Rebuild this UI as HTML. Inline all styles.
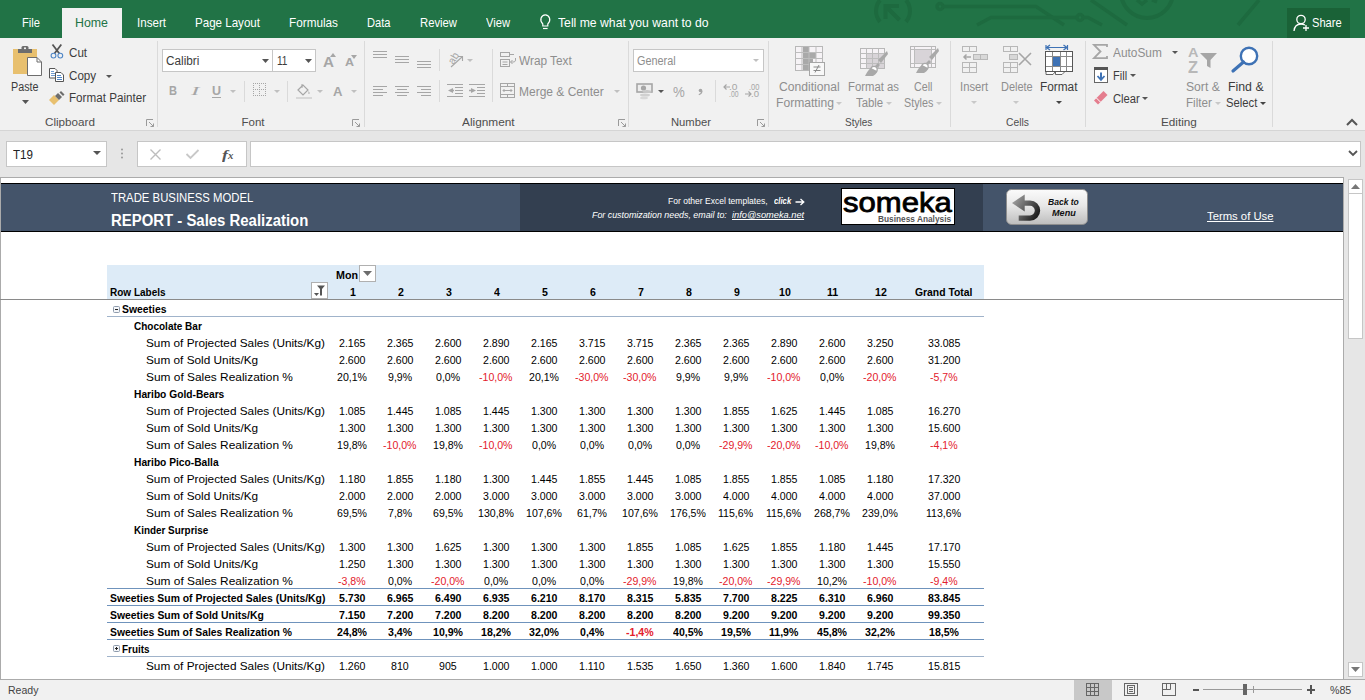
<!DOCTYPE html>
<html><head><meta charset="utf-8"><title>Excel</title>
<style>
html,body{margin:0;padding:0;}
body{width:1365px;height:700px;position:relative;overflow:hidden;background:#fff;font-family:'Liberation Sans', sans-serif;}
.t{position:absolute;white-space:pre;transform-origin:0 0;}
svg{overflow:visible}
</style></head><body>
<div style="position:absolute;left:0px;top:0px;width:1365px;height:38px;background:#217346;"></div>
<svg style="position:absolute;left:0px;top:0px;" width="1365" height="38" viewBox="0 0 1365 38">
<g fill="none" stroke="#1d6a3f" stroke-width="4">
<path d="M880,0.1 A17,17 0 0 0 880,21.9"/>
<path d="M906,0.1 A17,17 0 0 1 906,21.9"/>
<path d="M885.5,19 V6 H899 M886,6.5 L899.5,20"/>
</g>
<g fill="none" stroke="#1d6a3f" stroke-width="3.5">
<circle cx="940" cy="6.5" r="3"/>
<path d="M943,6.5 H1036 L1064,25"/>
<path d="M977,25 L991,17.5 H1077"/>
<circle cx="1080" cy="17.5" r="3"/>
<path d="M1083,17.5 H1088 L1102,25"/>
<path d="M1091,0 L1127,25"/>
<circle cx="1147" cy="-8" r="26" stroke-width="4"/>
<path d="M1137,0 L1142,4 L1147,0 M1152,0 L1157,2"/>
<path d="M1259,0 L1238,25"/>
</g></svg>
<div style="position:absolute;left:62px;top:8px;width:60px;height:30px;background:#F1F1F1;"></div>
<span class="t" style="left:21.50px;top:16.35px;font:400 13px 'Liberation Sans', sans-serif;line-height:13px;color:#fff;transform:scaleX(0.8591);">File</span>
<span class="t" style="left:75.20px;top:16.35px;font:400 13px 'Liberation Sans', sans-serif;line-height:13px;color:#217346;transform:scaleX(0.9514);">Home</span>
<span class="t" style="left:137.10px;top:16.35px;font:400 13px 'Liberation Sans', sans-serif;line-height:13px;color:#fff;transform:scaleX(0.8919);">Insert</span>
<span class="t" style="left:195.20px;top:16.35px;font:400 13px 'Liberation Sans', sans-serif;line-height:13px;color:#fff;transform:scaleX(0.8902);">Page Layout</span>
<span class="t" style="left:289.20px;top:16.35px;font:400 13px 'Liberation Sans', sans-serif;line-height:13px;color:#fff;transform:scaleX(0.9043);">Formulas</span>
<span class="t" style="left:367.30px;top:16.35px;font:400 13px 'Liberation Sans', sans-serif;line-height:13px;color:#fff;transform:scaleX(0.8555);">Data</span>
<span class="t" style="left:420.30px;top:16.35px;font:400 13px 'Liberation Sans', sans-serif;line-height:13px;color:#fff;transform:scaleX(0.8680);">Review</span>
<span class="t" style="left:486.30px;top:16.35px;font:400 13px 'Liberation Sans', sans-serif;line-height:13px;color:#fff;transform:scaleX(0.8586);">View</span>
<span class="t" style="left:557.50px;top:16.35px;font:400 13px 'Liberation Sans', sans-serif;line-height:13px;color:#fff;transform:scaleX(0.9388);">Tell me what you want to do</span>
<svg style="position:absolute;left:540px;top:14px;" width="11" height="16" viewBox="0 0 11 16"><g fill="none" stroke="#fff" stroke-width="1.2"><path d="M2.8,10 C0.8,8 0.6,5.5 1.1,4 C2,1.5 3.5,0.8 5.3,0.8 C7.1,0.8 8.6,1.5 9.5,4 C10,5.5 9.8,8 7.8,10 V12 H2.8 Z"/><path d="M3,14.5 H7.6"/></g></svg>
<div style="position:absolute;left:1287px;top:8px;width:63px;height:30px;background:#1a6237;"></div>
<svg style="position:absolute;left:1293px;top:14px;" width="18" height="18" viewBox="0 0 18 18"><g fill="none" stroke="#fff" stroke-width="1.3"><circle cx="8" cy="5.5" r="4.2"/><path d="M1,17 C1.5,12 4,10 8,10 C10,10 11,10.5 12,11"/><path d="M13,11 V17 M10,14 H16"/></g></svg>
<span class="t" style="left:1312.30px;top:16.35px;font:400 13px 'Liberation Sans', sans-serif;line-height:13px;color:#fff;transform:scaleX(0.8558);">Share</span>
<div style="position:absolute;left:0px;top:38px;width:1365px;height:92px;background:#F1F1F1;"></div>
<div style="position:absolute;left:0px;top:130px;width:1365px;height:1px;background:#D5D5D5;"></div>
<div style="position:absolute;left:157px;top:41px;width:1px;height:86px;background:#DADADA;"></div>
<div style="position:absolute;left:364px;top:41px;width:1px;height:86px;background:#DADADA;"></div>
<div style="position:absolute;left:628px;top:41px;width:1px;height:86px;background:#DADADA;"></div>
<div style="position:absolute;left:768px;top:41px;width:1px;height:86px;background:#DADADA;"></div>
<div style="position:absolute;left:950px;top:41px;width:1px;height:86px;background:#DADADA;"></div>
<div style="position:absolute;left:1085px;top:41px;width:1px;height:86px;background:#DADADA;"></div>
<div style="position:absolute;left:1272px;top:41px;width:1px;height:86px;background:#DADADA;"></div>
<span class="t" style="left:45.40px;top:116.62px;font:400 11.5px 'Liberation Sans', sans-serif;line-height:11.5px;color:#4E4E4E;transform:scaleX(1.0156);">Clipboard</span>
<span class="t" style="left:241.50px;top:116.62px;font:400 11.5px 'Liberation Sans', sans-serif;line-height:11.5px;color:#4E4E4E;">Font</span>
<span class="t" style="left:462.00px;top:116.62px;font:400 11.5px 'Liberation Sans', sans-serif;line-height:11.5px;color:#4E4E4E;transform:scaleX(1.0285);">Alignment</span>
<span class="t" style="left:670.70px;top:116.62px;font:400 11.5px 'Liberation Sans', sans-serif;line-height:11.5px;color:#4E4E4E;transform:scaleX(0.9778);">Number</span>
<span class="t" style="left:844.70px;top:116.62px;font:400 11.5px 'Liberation Sans', sans-serif;line-height:11.5px;color:#4E4E4E;transform:scaleX(0.8714);">Styles</span>
<span class="t" style="left:1005.70px;top:116.62px;font:400 11.5px 'Liberation Sans', sans-serif;line-height:11.5px;color:#4E4E4E;transform:scaleX(0.8958);">Cells</span>
<span class="t" style="left:1160.60px;top:116.62px;font:400 11.5px 'Liberation Sans', sans-serif;line-height:11.5px;color:#4E4E4E;transform:scaleX(1.0207);">Editing</span>
<svg style="position:absolute;left:146px;top:119px;" width="8" height="8" viewBox="0 0 8 8"><g fill="none" stroke="#9a9a9a" stroke-width="1"><path d="M0.5,7 V0.5 H7"/><path d="M3,3 L7.5,7.5 M4.5,7.5 H7.5 V4.5"/></g></svg>
<svg style="position:absolute;left:352px;top:119px;" width="8" height="8" viewBox="0 0 8 8"><g fill="none" stroke="#9a9a9a" stroke-width="1"><path d="M0.5,7 V0.5 H7"/><path d="M3,3 L7.5,7.5 M4.5,7.5 H7.5 V4.5"/></g></svg>
<svg style="position:absolute;left:618px;top:119px;" width="8" height="8" viewBox="0 0 8 8"><g fill="none" stroke="#9a9a9a" stroke-width="1"><path d="M0.5,7 V0.5 H7"/><path d="M3,3 L7.5,7.5 M4.5,7.5 H7.5 V4.5"/></g></svg>
<svg style="position:absolute;left:757px;top:119px;" width="8" height="8" viewBox="0 0 8 8"><g fill="none" stroke="#9a9a9a" stroke-width="1"><path d="M0.5,7 V0.5 H7"/><path d="M3,3 L7.5,7.5 M4.5,7.5 H7.5 V4.5"/></g></svg>
<svg style="position:absolute;left:1346px;top:118px;" width="12" height="8" viewBox="0 0 12 8"><path d="M1,7 L6,2 L11,7" fill="none" stroke="#555" stroke-width="2"/></svg>
<span class="t" style="left:11.40px;top:81.19px;font:400 12px 'Liberation Sans', sans-serif;line-height:12px;color:#3C3C3C;transform:scaleX(0.8961);">Paste</span>
<svg style="position:absolute;left:22px;top:100px;" width="7" height="4" viewBox="0 0 7 4"><path d="M0,0 H7 L3.5,4 Z" fill="#555"/></svg>
<svg style="position:absolute;left:13px;top:46px;" width="29" height="30" viewBox="0 0 29 30"><rect x="0" y="3" width="24" height="25" fill="#E8C06F"/><rect x="5" y="3" width="14" height="4" fill="#6d6d6d"/><rect x="8.5" y="0" width="7" height="4" rx="1.5" fill="#6d6d6d"/><circle cx="12" cy="2.2" r="1" fill="#fff"/>
<path d="M14.5,11.5 H24 L28.5,16 V29.5 H14.5 Z" fill="#fff" stroke="#6d6d6d" stroke-width="1"/><path d="M24,11.5 V16 H28.5" fill="none" stroke="#6d6d6d"/></svg>
<span class="t" style="left:68.60px;top:47.19px;font:400 12px 'Liberation Sans', sans-serif;line-height:12px;color:#3C3C3C;transform:scaleX(0.9686);">Cut</span>
<svg style="position:absolute;left:49px;top:44px;" width="16" height="15" viewBox="0 0 16 15"><g fill="none"><path d="M3.5,0.5 L10.3,9.5 M12.3,0.5 L5.5,9.5" stroke="#555" stroke-width="1.8"/><circle cx="4.5" cy="11.6" r="2.4" stroke="#4f86c6" stroke-width="1.1"/><circle cx="11.3" cy="11.6" r="2.4" stroke="#4f86c6" stroke-width="1.1"/></g></svg>
<span class="t" style="left:68.60px;top:70.19px;font:400 12px 'Liberation Sans', sans-serif;line-height:12px;color:#3C3C3C;transform:scaleX(0.9673);">Copy</span>
<svg style="position:absolute;left:105.5px;top:74.5px;" width="6" height="3" viewBox="0 0 6 3"><path d="M0,0 H6 L3,3 Z" fill="#555"/></svg>
<svg style="position:absolute;left:49px;top:68px;" width="15" height="14" viewBox="0 0 15 14"><path d="M0.5,0.5 H6 L8,2.5 V10 H0.5 Z" fill="#fff" stroke="#555"/><path d="M2,3.5 H5 M2,5.5 H6 M2,7.5 H6" stroke="#6f9bd0" stroke-width="1"/>
<path d="M6.5,4.5 H12 L14.5,7 V13.5 H6.5 Z" fill="#fff" stroke="#555"/><path d="M8,7.5 H12 M8,9.5 H13 M8,11.5 H13" stroke="#4f86c6" stroke-width="1"/></svg>
<span class="t" style="left:68.60px;top:92.19px;font:400 12px 'Liberation Sans', sans-serif;line-height:12px;color:#3C3C3C;transform:scaleX(0.9715);">Format Painter</span>
<svg style="position:absolute;left:49px;top:91px;" width="16" height="15" viewBox="0 0 16 15"><path d="M0,9 L5,4 L10,9 L5,14 Z" fill="#E8C06F"/><path d="M6,5 L9,2 L13,6 L10,9 Z" fill="#6d6d6d"/><path d="M10.5,1.5 L12,0 L15.5,3.5 L14,5 Z" fill="#6d6d6d"/></svg>
<div style="position:absolute;left:162px;top:49px;width:109px;height:21px;border:1px solid #C6C6C6;background:#fff;"></div>
<div style="position:absolute;left:272px;top:49px;width:42px;height:21px;border:1px solid #C6C6C6;background:#fff;"></div>
<span class="t" style="left:165.50px;top:55.19px;font:400 12px 'Liberation Sans', sans-serif;line-height:12px;color:#3C3C3C;transform:scaleX(0.9790);">Calibri</span>
<span class="t" style="left:276.50px;top:55.19px;font:400 12px 'Liberation Sans', sans-serif;line-height:12px;color:#3C3C3C;transform:scaleX(0.8421);">11</span>
<svg style="position:absolute;left:262px;top:59px;" width="7" height="4" viewBox="0 0 7 4"><path d="M0,0 H7 L3.5,4 Z" fill="#555"/></svg>
<svg style="position:absolute;left:305px;top:59px;" width="7" height="4" viewBox="0 0 7 4"><path d="M0,0 H7 L3.5,4 Z" fill="#555"/></svg>
<span class="t" style="left:322.70px;top:54.50px;font:700 14px 'Liberation Sans', sans-serif;line-height:14px;color:#A6A6A6;transform:scaleX(1.0864);">A</span>
<svg style="position:absolute;left:330px;top:53px;" width="6" height="4" viewBox="0 0 6 4"><path d="M0,4 L3,0 L6,4 Z" fill="#A6A6A6"/></svg>
<span class="t" style="left:345.00px;top:57.04px;font:700 11px 'Liberation Sans', sans-serif;line-height:11px;color:#A6A6A6;transform:scaleX(1.1316);">A</span>
<svg style="position:absolute;left:351px;top:55px;" width="6" height="4" viewBox="0 0 6 4"><path d="M0,0 H6 L3,4 Z" fill="#A6A6A6"/></svg>
<span class="t" style="left:168.80px;top:85.19px;font:700 12px 'Liberation Sans', sans-serif;line-height:12px;color:#A6A6A6;transform:scaleX(0.9225);">B</span>
<span class="t" style="left:191.00px;top:85.19px;font:italic 400 12px 'Liberation Sans', sans-serif;line-height:12px;color:#A6A6A6;transform:scaleX(2.0935);font-family:'Liberation Serif',serif;">I</span>
<span class="t" style="left:212.00px;top:85.19px;font:700 12px 'Liberation Sans', sans-serif;line-height:12px;color:#A6A6A6;transform:scaleX(1.0378);">U</span>
<div style="position:absolute;left:212px;top:97px;width:9px;height:1px;background:#A6A6A6;"></div>
<svg style="position:absolute;left:230px;top:90px;" width="6" height="3" viewBox="0 0 6 3"><path d="M0,0 H6 L3,3 Z" fill="#C0C0C0"/></svg>
<div style="position:absolute;left:244px;top:81px;width:1px;height:21px;background:#DADADA;"></div>
<svg style="position:absolute;left:253px;top:83px;" width="13" height="13" viewBox="0 0 13 13"><rect x="0" y="0" width="1" height="1" fill="#A6A6A6"/><rect x="0" y="2" width="1" height="1" fill="#A6A6A6"/><rect x="0" y="4" width="1" height="1" fill="#A6A6A6"/><rect x="0" y="6" width="1" height="1" fill="#A6A6A6"/><rect x="0" y="8" width="1" height="1" fill="#A6A6A6"/><rect x="0" y="10" width="1" height="1" fill="#A6A6A6"/><rect x="0" y="12" width="1" height="1" fill="#A6A6A6"/><rect x="2" y="0" width="1" height="1" fill="#A6A6A6"/><rect x="2" y="6" width="1" height="1" fill="#A6A6A6"/><rect x="2" y="12" width="1" height="1" fill="#A6A6A6"/><rect x="4" y="0" width="1" height="1" fill="#A6A6A6"/><rect x="4" y="6" width="1" height="1" fill="#A6A6A6"/><rect x="4" y="12" width="1" height="1" fill="#A6A6A6"/><rect x="6" y="0" width="1" height="1" fill="#A6A6A6"/><rect x="6" y="2" width="1" height="1" fill="#A6A6A6"/><rect x="6" y="4" width="1" height="1" fill="#A6A6A6"/><rect x="6" y="6" width="1" height="1" fill="#A6A6A6"/><rect x="6" y="8" width="1" height="1" fill="#A6A6A6"/><rect x="6" y="10" width="1" height="1" fill="#A6A6A6"/><rect x="6" y="12" width="1" height="1" fill="#A6A6A6"/><rect x="8" y="0" width="1" height="1" fill="#A6A6A6"/><rect x="8" y="6" width="1" height="1" fill="#A6A6A6"/><rect x="8" y="12" width="1" height="1" fill="#A6A6A6"/><rect x="10" y="0" width="1" height="1" fill="#A6A6A6"/><rect x="10" y="6" width="1" height="1" fill="#A6A6A6"/><rect x="10" y="12" width="1" height="1" fill="#A6A6A6"/><rect x="12" y="0" width="1" height="1" fill="#A6A6A6"/><rect x="12" y="2" width="1" height="1" fill="#A6A6A6"/><rect x="12" y="4" width="1" height="1" fill="#A6A6A6"/><rect x="12" y="6" width="1" height="1" fill="#A6A6A6"/><rect x="12" y="8" width="1" height="1" fill="#A6A6A6"/><rect x="12" y="10" width="1" height="1" fill="#A6A6A6"/><rect x="12" y="12" width="1" height="1" fill="#A6A6A6"/></svg>
<svg style="position:absolute;left:273.5px;top:90px;" width="6" height="3" viewBox="0 0 6 3"><path d="M0,0 H6 L3,3 Z" fill="#C0C0C0"/></svg>
<div style="position:absolute;left:287px;top:81px;width:1px;height:21px;background:#DADADA;"></div>
<svg style="position:absolute;left:296px;top:83px;" width="16" height="16" viewBox="0 0 16 16"><path d="M2,7 L7,2 L12,7 L7,12 Z" fill="none" stroke="#A6A6A6" stroke-width="1.2"/><path d="M6,1 V5" stroke="#A6A6A6"/><path d="M12.5,8 C14,10 14,11 12.5,11" fill="#A6A6A6"/><rect x="0" y="14" width="16" height="2" fill="#D8D8D8"/></svg>
<svg style="position:absolute;left:316.5px;top:90px;" width="6" height="3" viewBox="0 0 6 3"><path d="M0,0 H6 L3,3 Z" fill="#C0C0C0"/></svg>
<span class="t" style="left:332.70px;top:85.35px;font:700 13px 'Liberation Sans', sans-serif;line-height:13px;color:#A6A6A6;transform:scaleX(1.0116);">A</span>
<svg style="position:absolute;left:350.5px;top:90px;" width="6" height="3" viewBox="0 0 6 3"><path d="M0,0 H6 L3,3 Z" fill="#C0C0C0"/></svg>
<svg style="position:absolute;left:373px;top:51px;" width="14" height="8" viewBox="0 0 14 8"><path d="M0,0.5 H14" stroke="#A6A6A6" stroke-width="1"/><path d="M0,3.5 H14" stroke="#A6A6A6" stroke-width="1"/><path d="M0,6.5 H14" stroke="#A6A6A6" stroke-width="1"/></svg>
<svg style="position:absolute;left:395px;top:56px;" width="14" height="8" viewBox="0 0 14 8"><path d="M0,0.5 H14" stroke="#A6A6A6" stroke-width="1"/><path d="M0,3.5 H14" stroke="#A6A6A6" stroke-width="1"/><path d="M0,6.5 H14" stroke="#A6A6A6" stroke-width="1"/></svg>
<svg style="position:absolute;left:417px;top:61px;" width="14" height="8" viewBox="0 0 14 8"><path d="M0,0.5 H14" stroke="#A6A6A6" stroke-width="1"/><path d="M0,3.5 H14" stroke="#A6A6A6" stroke-width="1"/><path d="M0,6.5 H14" stroke="#A6A6A6" stroke-width="1"/></svg>
<svg style="position:absolute;left:373px;top:86px;" width="14" height="11" viewBox="0 0 14 11"><path d="M0,0.5 H14" stroke="#A6A6A6" stroke-width="1"/><path d="M0,3.5 H10" stroke="#A6A6A6" stroke-width="1"/><path d="M0,6.5 H14" stroke="#A6A6A6" stroke-width="1"/><path d="M0,9.5 H10" stroke="#A6A6A6" stroke-width="1"/></svg>
<svg style="position:absolute;left:395px;top:86px;" width="14" height="11" viewBox="0 0 14 11"><path d="M0,0.5 H14" stroke="#A6A6A6" stroke-width="1"/><path d="M2,3.5 H12" stroke="#A6A6A6" stroke-width="1"/><path d="M0,6.5 H14" stroke="#A6A6A6" stroke-width="1"/><path d="M2,9.5 H12" stroke="#A6A6A6" stroke-width="1"/></svg>
<svg style="position:absolute;left:417px;top:86px;" width="14" height="11" viewBox="0 0 14 11"><path d="M0,0.5 H14" stroke="#A6A6A6" stroke-width="1"/><path d="M4,3.5 H14" stroke="#A6A6A6" stroke-width="1"/><path d="M0,6.5 H14" stroke="#A6A6A6" stroke-width="1"/><path d="M4,9.5 H14" stroke="#A6A6A6" stroke-width="1"/></svg>
<div style="position:absolute;left:439px;top:49px;width:1px;height:22px;background:#DADADA;"></div>
<div style="position:absolute;left:439px;top:80px;width:1px;height:22px;background:#DADADA;"></div>
<svg style="position:absolute;left:447px;top:52px;" width="17" height="16" viewBox="0 0 17 16"><text x="0" y="0" font-size="10.5" fill="#A6A6A6" font-family="Liberation Sans" transform="translate(6.5,13) rotate(-60)">ab</text><path d="M4,15 L15,5 M11,4.5 H15.5 V9" fill="none" stroke="#A6A6A6" stroke-width="1.1"/></svg>
<svg style="position:absolute;left:467px;top:59px;" width="6" height="3" viewBox="0 0 6 3"><path d="M0,0 H6 L3,3 Z" fill="#C0C0C0"/></svg>
<svg style="position:absolute;left:447px;top:84px;" width="16" height="14" viewBox="0 0 16 14"><path d="M0,0.5 H16" stroke="#A6A6A6" stroke-width="1"/><path d="M8,3.5 H16" stroke="#A6A6A6" stroke-width="1"/><path d="M8,6.5 H16" stroke="#A6A6A6" stroke-width="1"/><path d="M8,9.5 H16" stroke="#A6A6A6" stroke-width="1"/><path d="M0,12.5 H16" stroke="#A6A6A6" stroke-width="1"/><path d="M6,4 L1,6.5 L6,9 Z" fill="#A6A6A6"/><path d="M4,6.5 H7" stroke="#A6A6A6" stroke-width="1.5"/></svg>
<svg style="position:absolute;left:469px;top:84px;" width="16" height="14" viewBox="0 0 16 14"><path d="M0,0.5 H16" stroke="#A6A6A6" stroke-width="1"/><path d="M8,3.5 H16" stroke="#A6A6A6" stroke-width="1"/><path d="M8,6.5 H16" stroke="#A6A6A6" stroke-width="1"/><path d="M8,9.5 H16" stroke="#A6A6A6" stroke-width="1"/><path d="M0,12.5 H16" stroke="#A6A6A6" stroke-width="1"/><path d="M2,4 L7,6.5 L2,9 Z" fill="#A6A6A6"/><path d="M0,6.5 H3" stroke="#A6A6A6" stroke-width="1.5"/></svg>
<div style="position:absolute;left:492px;top:49px;width:1px;height:53px;background:#DADADA;"></div>
<svg style="position:absolute;left:500px;top:52px;" width="17" height="16" viewBox="0 0 17 16"><g fill="none" stroke="#A6A6A6"><rect x="0.5" y="0.5" width="9" height="4"/><path d="M9.5,2.5 H14"/><rect x="0.5" y="7.5" width="9" height="7"/><path d="M2.5,10 H7.5 M2.5,12.5 H7.5"/><path d="M15.5,6 V8 C15.5,9.5 14.5,10 13,10 H10.5 M12.5,8 L10.5,10 L12.5,12"/></g></svg>
<span class="t" style="left:519.00px;top:55.19px;font:400 12px 'Liberation Sans', sans-serif;line-height:12px;color:#8E8E8E;transform:scaleX(0.9855);">Wrap Text</span>
<svg style="position:absolute;left:500px;top:83px;" width="15" height="15" viewBox="0 0 15 15"><g fill="none" stroke="#A6A6A6"><rect x="0.5" y="0.5" width="14" height="14"/><path d="M0.5,3.5 H14.5 M0.5,11.5 H14.5 M7.5,0.5 V3.5 M7.5,11.5 V14.5 M3,7.5 H12 M4.5,6 L3,7.5 L4.5,9 M10.5,6 L12,7.5 L10.5,9"/></g></svg>
<span class="t" style="left:519.00px;top:86.19px;font:400 12px 'Liberation Sans', sans-serif;line-height:12px;color:#8E8E8E;">Merge &amp; Center</span>
<svg style="position:absolute;left:613.5px;top:90px;" width="6" height="3" viewBox="0 0 6 3"><path d="M0,0 H6 L3,3 Z" fill="#C0C0C0"/></svg>
<div style="position:absolute;left:633px;top:49px;width:129px;height:21px;border:1px solid #C6C6C6;background:#fff;"></div>
<span class="t" style="left:636.70px;top:55.19px;font:400 12px 'Liberation Sans', sans-serif;line-height:12px;color:#8E8E8E;transform:scaleX(0.9039);">General</span>
<svg style="position:absolute;left:753px;top:59px;" width="6" height="3" viewBox="0 0 6 3"><path d="M0,0 H6 L3,3 Z" fill="#C0C0C0"/></svg>
<svg style="position:absolute;left:636px;top:83px;" width="17" height="17" viewBox="0 0 17 17"><rect x="1" y="1" width="15" height="8" fill="#EDEDED" stroke="#A6A6A6" stroke-width="1.6"/><circle cx="7.5" cy="5" r="2.6" fill="#A6A6A6"/><ellipse cx="11" cy="8.5" rx="4.5" ry="1.6" fill="#C8C8C8"/><ellipse cx="9" cy="12" rx="5" ry="1.5" fill="#D0D0D0"/><ellipse cx="8" cy="15" rx="4" ry="1.3" fill="#D8D8D8"/></svg>
<svg style="position:absolute;left:657.5px;top:90px;" width="6" height="3" viewBox="0 0 6 3"><path d="M0,0 H6 L3,3 Z" fill="#555"/></svg>
<span class="t" style="left:672.60px;top:84.23px;font:400 15.5px 'Liberation Sans', sans-serif;line-height:15.5px;color:#A6A6A6;transform:scaleX(0.8553);">%</span>
<svg style="position:absolute;left:697px;top:88px;" width="6" height="7" viewBox="0 0 6 7"><circle cx="3.5" cy="2.5" r="1.8" fill="#A6A6A6"/><path d="M5,3 C4.8,5 3.5,6.2 1.8,6.8" fill="none" stroke="#A6A6A6" stroke-width="1.2"/></svg>
<div style="position:absolute;left:715px;top:80px;width:1px;height:22px;background:#DADADA;"></div>
<span class="t" style="left:729.00px;top:82.73px;font:400 9px 'Liberation Sans', sans-serif;line-height:9px;color:#A6A6A6;transform:scaleX(1.1310);">.0</span>
<span class="t" style="left:728.50px;top:89.73px;font:400 9px 'Liberation Sans', sans-serif;line-height:9px;color:#A6A6A6;transform:scaleX(0.7591);">.00</span>
<svg style="position:absolute;left:722.5px;top:84px;" width="7" height="6" viewBox="0 0 7 6"><path d="M7,3 H1 M3.5,0.5 L1,3 L3.5,5.5" fill="none" stroke="#A6A6A6" stroke-width="1.2"/></svg>
<span class="t" style="left:748.50px;top:82.73px;font:400 9px 'Liberation Sans', sans-serif;line-height:9px;color:#A6A6A6;transform:scaleX(0.8390);">.00</span>
<span class="t" style="left:751.00px;top:89.73px;font:400 9px 'Liberation Sans', sans-serif;line-height:9px;color:#A6A6A6;transform:scaleX(1.0644);">.0</span>
<svg style="position:absolute;left:745px;top:91px;" width="7" height="6" viewBox="0 0 7 6"><path d="M0,3 H6 M3.5,0.5 L6,3 L3.5,5.5" fill="none" stroke="#A6A6A6" stroke-width="1.2"/></svg>
<span class="t" style="left:778.60px;top:81.19px;font:400 12px 'Liberation Sans', sans-serif;line-height:12px;color:#8E8E8E;transform:scaleX(1.0109);">Conditional</span>
<span class="t" style="left:775.70px;top:97.19px;font:400 12px 'Liberation Sans', sans-serif;line-height:12px;color:#8E8E8E;transform:scaleX(1.0094);">Formatting</span>
<svg style="position:absolute;left:836px;top:102px;" width="6" height="3" viewBox="0 0 6 3"><path d="M0,0 H6 L3,3 Z" fill="#C8C8C8"/></svg>
<svg style="position:absolute;left:795px;top:46px;" width="31" height="30" viewBox="0 0 31 30"><rect x="0.5" y="0.5" width="27" height="24" fill="#F6F3F6" stroke="#B8B8B8"/>
<rect x="8" y="1" width="6" height="5" fill="#A9A9A9"/><rect x="8" y="7" width="13" height="5" fill="#A9A9A9"/><rect x="8" y="13" width="10" height="5" fill="#A9A9A9"/><rect x="8" y="19" width="6" height="5" fill="#A9A9A9"/>
<path d="M7,0.5 V24.5 M14,0.5 V24.5 M21,0.5 V24.5 M0.5,6.5 H27.5 M0.5,12.5 H27.5 M0.5,18.5 H27.5" stroke="#BDBDBD"/>
<rect x="14.5" y="16.5" width="15" height="13" fill="#F8F8F8" stroke="#A6A6A6"/><path d="M18.5,21 H25.5 M18.5,24.5 H25.5 M24,19 L20,26.5" stroke="#8a8a8a" stroke-width="1"/></svg>
<span class="t" style="left:847.60px;top:81.19px;font:400 12px 'Liberation Sans', sans-serif;line-height:12px;color:#8E8E8E;transform:scaleX(0.9442);">Format as</span>
<span class="t" style="left:856.40px;top:97.19px;font:400 12px 'Liberation Sans', sans-serif;line-height:12px;color:#8E8E8E;transform:scaleX(0.9481);">Table</span>
<svg style="position:absolute;left:886px;top:102px;" width="6" height="3" viewBox="0 0 6 3"><path d="M0,0 H6 L3,3 Z" fill="#C8C8C8"/></svg>
<svg style="position:absolute;left:860px;top:48px;" width="29" height="28" viewBox="0 0 29 28"><rect x="0.5" y="0.5" width="24" height="20" fill="#F6F3F6" stroke="#B8B8B8"/>
<rect x="6" y="5" width="18" height="15" fill="#D8D4D8"/>
<path d="M6.5,0.5 V20.5 M12.5,0.5 V20.5 M18.5,0.5 V20.5 M0.5,5.5 H24.5 M0.5,10.5 H24.5 M0.5,15.5 H24.5" stroke="#BDBDBD"/>
<path d="M28,6 L21,15 L18,12 L27,3 Z" fill="#A9A9A9"/><path d="M20,17 L17,20 L15,18 L18,15 Z" fill="#A9A9A9"/><circle cx="14" cy="21.5" r="3.2" fill="#fff" stroke="#A9A9A9" stroke-width="1.3"/><path d="M11,20 C8,22 6,26 5,28 H13 C15,27 17,25 17,23 Z" fill="#A9A9A9"/></svg>
<span class="t" style="left:913.60px;top:81.19px;font:400 12px 'Liberation Sans', sans-serif;line-height:12px;color:#8E8E8E;transform:scaleX(0.8901);">Cell</span>
<span class="t" style="left:904.30px;top:97.19px;font:400 12px 'Liberation Sans', sans-serif;line-height:12px;color:#8E8E8E;transform:scaleX(0.8964);">Styles</span>
<svg style="position:absolute;left:936px;top:102px;" width="6" height="3" viewBox="0 0 6 3"><path d="M0,0 H6 L3,3 Z" fill="#C8C8C8"/></svg>
<svg style="position:absolute;left:910px;top:46px;" width="29" height="28" viewBox="0 0 29 28"><rect x="0.5" y="0.5" width="25" height="21" fill="#F6F3F6" stroke="#B8B8B8"/>
<rect x="5" y="4" width="16" height="13" fill="#D8D4D8"/>
<path d="M4.5,0.5 V21.5 M21.5,0.5 V21.5 M0.5,3.5 H25.5 M0.5,17.5 H25.5" stroke="#BDBDBD"/>
<path d="M29,5 L22,14 L19,11 L28,2 Z" fill="#A9A9A9"/><path d="M21,16 L18,19 L16,17 L19,14 Z" fill="#A9A9A9"/><circle cx="15" cy="20.5" r="3.2" fill="#fff" stroke="#A9A9A9" stroke-width="1.3"/><path d="M12,19 C9,21 7,25 6,27 H14 C16,26 18,24 18,22 Z" fill="#A9A9A9"/></svg>
<span class="t" style="left:960.40px;top:81.19px;font:400 12px 'Liberation Sans', sans-serif;line-height:12px;color:#8E8E8E;transform:scaleX(0.9395);">Insert</span>
<svg style="position:absolute;left:971px;top:101px;" width="6" height="3" viewBox="0 0 6 3"><path d="M0,0 H6 L3,3 Z" fill="#C8C8C8"/></svg>
<svg style="position:absolute;left:962px;top:46px;" width="26" height="27" viewBox="0 0 26 27"><g fill="none" stroke="#B8B8B8"><rect x="0.5" y="0.5" width="14" height="5"/><path d="M7.5,0.5 V5.5"/>
<rect x="11.5" y="8.5" width="14" height="5" fill="#D8D8D8"/><path d="M18.5,8.5 V13.5"/>
<rect x="0.5" y="16.5" width="14" height="10"/><path d="M7.5,16.5 V26.5 M0.5,21.5 H14.5"/></g>
<path d="M9,11 H2 M4.5,8.5 L2,11 L4.5,13.5" fill="none" stroke="#A6A6A6" stroke-width="1.5"/></svg>
<span class="t" style="left:1000.70px;top:81.19px;font:400 12px 'Liberation Sans', sans-serif;line-height:12px;color:#8E8E8E;transform:scaleX(0.9139);">Delete</span>
<svg style="position:absolute;left:1013px;top:101px;" width="6" height="3" viewBox="0 0 6 3"><path d="M0,0 H6 L3,3 Z" fill="#C8C8C8"/></svg>
<svg style="position:absolute;left:1003px;top:46px;" width="30" height="27" viewBox="0 0 30 27"><g fill="none" stroke="#B8B8B8"><rect x="0.5" y="0.5" width="14" height="5"/><path d="M7.5,0.5 V5.5"/>
<rect x="6.5" y="8.5" width="8" height="5" fill="#D8D8D8"/>
<rect x="0.5" y="16.5" width="14" height="10"/><path d="M7.5,16.5 V26.5 M0.5,21.5 H14.5"/></g>
<path d="M16,7 L28,19 M28,7 L16,19" stroke="#A6A6A6" stroke-width="1.6"/></svg>
<span class="t" style="left:1040.40px;top:81.19px;font:400 12px 'Liberation Sans', sans-serif;line-height:12px;color:#3C3C3C;transform:scaleX(0.9864);">Format</span>
<svg style="position:absolute;left:1056px;top:101px;" width="6" height="3" viewBox="0 0 6 3"><path d="M0,0 H6 L3,3 Z" fill="#444"/></svg>
<svg style="position:absolute;left:1045px;top:45px;" width="28" height="31" viewBox="0 0 28 31"><path d="M1,0 V5 M22.5,0 V5 M1.5,2.5 H22" fill="none" stroke="#3E72B5" stroke-width="1.2"/><path d="M5,0 L1.5,2.5 L5,5 M18.5,0 L22,2.5 L18.5,5" fill="none" stroke="#3E72B5" stroke-width="1.3"/>
<rect x="0.5" y="6.5" width="27" height="20" fill="#fff"/>
<rect x="7.5" y="11.5" width="8" height="10" fill="#3E72B5"/>
<path d="M7.5,6.5 V26.5 M15.5,6.5 V26.5 M21.5,6.5 V26.5 M0.5,11.5 H27.5 M0.5,21.5 H27.5" stroke="#8a8a8a"/>
<rect x="0.5" y="6.5" width="27" height="20" fill="none" stroke="#555"/>
<path d="M1,27 V29.5 H8 L10,27 M10.5,27 V29.5 H17 L19.5,27" fill="#fff" stroke="#555" stroke-width="0.9"/></svg>
<svg style="position:absolute;left:1093px;top:44px;" width="15" height="15" viewBox="0 0 15 15"><path d="M14,3 V0.8 H1 L7.5,7.5 L1,14.2 H14 V12" fill="none" stroke="#A6A6A6" stroke-width="1.8"/></svg>
<span class="t" style="left:1112.50px;top:47.19px;font:400 12px 'Liberation Sans', sans-serif;line-height:12px;color:#8E8E8E;transform:scaleX(0.9887);">AutoSum</span>
<svg style="position:absolute;left:1171.5px;top:51px;" width="6" height="3" viewBox="0 0 6 3"><path d="M0,0 H6 L3,3 Z" fill="#555"/></svg>
<svg style="position:absolute;left:1094px;top:67px;" width="14" height="16" viewBox="0 0 14 16"><rect x="0.5" y="0.5" width="13" height="15" fill="#fff" stroke="#666"/><rect x="0" y="0" width="14" height="3" fill="#555"/><path d="M7,5.5 V12" fill="none" stroke="#3E72B5" stroke-width="2"/><path d="M3.5,9 L7,12.8 L10.5,9" fill="none" stroke="#3E72B5" stroke-width="1.8"/></svg>
<span class="t" style="left:1112.50px;top:70.19px;font:400 12px 'Liberation Sans', sans-serif;line-height:12px;color:#3C3C3C;transform:scaleX(0.9199);">Fill</span>
<svg style="position:absolute;left:1129.5px;top:74px;" width="6" height="3" viewBox="0 0 6 3"><path d="M0,0 H6 L3,3 Z" fill="#555"/></svg>
<svg style="position:absolute;left:1094px;top:91px;" width="14" height="14" viewBox="0 0 14 14"><path d="M0,9.5 L9.5,0 L13.5,4 L4,13.5 Z" fill="#E47D8E"/><path d="M2.3,6.9 L6.6,11.2" stroke="#fff" stroke-width="1"/></svg>
<span class="t" style="left:1112.50px;top:93.19px;font:400 12px 'Liberation Sans', sans-serif;line-height:12px;color:#3C3C3C;transform:scaleX(0.9342);">Clear</span>
<svg style="position:absolute;left:1141.5px;top:97px;" width="6" height="3" viewBox="0 0 6 3"><path d="M0,0 H6 L3,3 Z" fill="#555"/></svg>
<span class="t" style="left:1188.30px;top:46.77px;font:700 12.5px 'Liberation Sans', sans-serif;line-height:12.5px;color:#B8B8B8;transform:scaleX(1.1626);">A</span>
<span class="t" style="left:1188.30px;top:58.96px;font:700 17px 'Liberation Sans', sans-serif;line-height:17px;color:#B8B8B8;transform:scaleX(0.9624);">Z</span>
<svg style="position:absolute;left:1200px;top:53px;" width="17" height="15" viewBox="0 0 17 15"><path d="M0,0 H17 L10.5,7 V15 L7,13 V7 Z" fill="#A6A6A6"/></svg>
<span class="t" style="left:1186.20px;top:81.19px;font:400 12px 'Liberation Sans', sans-serif;line-height:12px;color:#8E8E8E;transform:scaleX(1.0132);">Sort &amp;</span>
<span class="t" style="left:1186.00px;top:97.19px;font:400 12px 'Liberation Sans', sans-serif;line-height:12px;color:#8E8E8E;transform:scaleX(0.9711);">Filter</span>
<svg style="position:absolute;left:1215px;top:102px;" width="6" height="3" viewBox="0 0 6 3"><path d="M0,0 H6 L3,3 Z" fill="#C8C8C8"/></svg>
<svg style="position:absolute;left:1231px;top:46px;" width="29" height="27" viewBox="0 0 29 27"><circle cx="18" cy="10" r="8.2" fill="#fff" stroke="#3E72B5" stroke-width="2.4"/><path d="M12.5,16 L2,25" stroke="#3E72B5" stroke-width="3.2" stroke-linecap="round"/></svg>
<span class="t" style="left:1228.30px;top:81.19px;font:400 12px 'Liberation Sans', sans-serif;line-height:12px;color:#3C3C3C;transform:scaleX(1.0263);">Find &amp;</span>
<span class="t" style="left:1226.00px;top:97.19px;font:400 12px 'Liberation Sans', sans-serif;line-height:12px;color:#3C3C3C;transform:scaleX(0.9383);">Select</span>
<svg style="position:absolute;left:1259.5px;top:102px;" width="6" height="3" viewBox="0 0 6 3"><path d="M0,0 H6 L3,3 Z" fill="#444"/></svg>
<div style="position:absolute;left:0px;top:131px;width:1365px;height:46px;background:#E6E6E6;"></div>
<div style="position:absolute;left:6px;top:141px;width:99px;height:24px;border:1px solid #C6C6C6;background:#fff;"></div>
<span class="t" style="left:12.50px;top:149.19px;font:400 12px 'Liberation Sans', sans-serif;line-height:12px;color:#222;transform:scaleX(0.9668);">T19</span>
<svg style="position:absolute;left:93px;top:151px;" width="8" height="4" viewBox="0 0 8 4"><path d="M0,0 H8 L4,4 Z" fill="#555"/></svg>
<svg style="position:absolute;left:120px;top:148px;" width="4" height="12" viewBox="0 0 4 12"><circle cx="2" cy="1.5" r="1" fill="#999"/><circle cx="2" cy="5.5" r="1" fill="#999"/><circle cx="2" cy="9.5" r="1" fill="#999"/></svg>
<div style="position:absolute;left:137px;top:141px;width:108px;height:24px;border:1px solid #C6C6C6;background:#fff;"></div>
<svg style="position:absolute;left:150px;top:149px;" width="11" height="11" viewBox="0 0 11 11"><path d="M0.5,0.5 L10.5,10.5 M10.5,0.5 L0.5,10.5" stroke="#BDBDBD" stroke-width="1.4"/></svg>
<svg style="position:absolute;left:186px;top:149px;" width="13" height="10" viewBox="0 0 13 10"><path d="M0.5,5 L4.5,9 L12.5,1" fill="none" stroke="#C8C8C8" stroke-width="1.8"/></svg>
<span class="t" style="left:222.00px;top:148.35px;font:italic 700 13px 'Liberation Sans', sans-serif;line-height:13px;color:#555;transform:scaleX(1.3813);font-family:'Liberation Serif',serif;">f</span>
<span class="t" style="left:228.00px;top:150.88px;font:italic 700 10px 'Liberation Sans', sans-serif;line-height:10px;color:#555;transform:scaleX(1.0787);font-family:'Liberation Serif',serif;">x</span>
<div style="position:absolute;left:250px;top:141px;width:1109px;height:24px;border:1px solid #C6C6C6;background:#fff;"></div>
<svg style="position:absolute;left:1348px;top:150px;" width="10" height="6" viewBox="0 0 10 6"><path d="M1,1 L5,5 L9,1" fill="none" stroke="#555" stroke-width="1.8"/></svg>
<div style="position:absolute;left:0px;top:177px;width:1345px;height:1px;background:#ABABAB;"></div>
<div style="position:absolute;left:0px;top:178px;width:1345px;height:501px;background:#fff;"></div>
<div style="position:absolute;left:0px;top:177px;width:1px;height:502px;background:#ABABAB;"></div>
<div style="position:absolute;left:1343px;top:177px;width:1px;height:502px;background:#ABABAB;"></div>
<div style="position:absolute;left:1344px;top:177px;width:21px;height:502px;background:#E6E6E6;"></div>
<div style="position:absolute;left:1348px;top:179px;width:13px;height:158px;border:1px solid #C6C6C6;background:#fff;"></div>
<div style="position:absolute;left:1349px;top:193px;width:13px;height:1px;background:#C6C6C6;"></div>
<svg style="position:absolute;left:1351px;top:184px;" width="9" height="5" viewBox="0 0 9 5"><path d="M0,5 L4.5,0 L9,5 Z" fill="#777"/></svg>
<div style="position:absolute;left:1348px;top:662px;width:13px;height:13px;border:1px solid #C6C6C6;background:#fff;"></div>
<svg style="position:absolute;left:1351px;top:667px;" width="9" height="5" viewBox="0 0 9 5"><path d="M0,0 L4.5,5 L9,0 Z" fill="#777"/></svg>
<div style="position:absolute;left:1px;top:184px;width:1342px;height:48px;background:#44546A;"></div>
<div style="position:absolute;left:520px;top:184px;width:463px;height:48px;background:#333F50;"></div>
<div style="position:absolute;left:1px;top:183px;width:1342px;height:1px;background:#000;"></div>
<div style="position:absolute;left:1px;top:231px;width:1342px;height:1px;background:#000;"></div>
<span class="t" style="left:111.40px;top:191.35px;font:400 13px 'Liberation Sans', sans-serif;line-height:13px;color:#fff;transform:scaleX(0.8722);">TRADE BUSINESS MODEL</span>
<span class="t" style="left:111.00px;top:212.81px;font:700 16px 'Liberation Sans', sans-serif;line-height:16px;color:#fff;transform:scaleX(0.9324);">REPORT - Sales Realization</span>
<span class="t" style="left:667.80px;top:196.31px;font:400 9.5px 'Liberation Sans', sans-serif;line-height:9.5px;color:#fff;transform:scaleX(0.8982);">For other Excel templates,</span>
<span class="t" style="left:774.00px;top:196.31px;font:italic 700 9.5px 'Liberation Sans', sans-serif;line-height:9.5px;color:#fff;transform:scaleX(0.8136);">click</span>
<svg style="position:absolute;left:795px;top:198px;" width="10" height="8" viewBox="0 0 10 8"><path d="M0.5,4 H8.5 M5.5,1 L8.8,4 L5.5,7" fill="none" stroke="#fff" stroke-width="1.3"/></svg>
<span class="t" style="left:592.30px;top:210.31px;font:italic 400 9.5px 'Liberation Sans', sans-serif;line-height:9.5px;color:#fff;transform:scaleX(0.9317);">For customization needs, email to:</span>
<span class="t" style="left:731.90px;top:210.31px;font:italic 400 9.5px 'Liberation Sans', sans-serif;line-height:9.5px;color:#fff;transform:scaleX(0.9733);text-decoration:underline;">info@someka.net</span>
<div style="position:absolute;left:841px;top:188px;width:114px;height:37px;background:#000;"></div>
<div style="position:absolute;left:842px;top:189px;width:112px;height:35px;background:#fff;"></div>
<span class="t" style="left:843.20px;top:189.07px;font:400 27.5px 'Liberation Sans', sans-serif;line-height:27.5px;color:#000;transform:scaleX(1.1298);-webkit-text-stroke:0.8px #000;">someka</span>
<span class="t" style="left:878.30px;top:214.73px;font:700 9px 'Liberation Sans', sans-serif;line-height:9px;color:#555;transform:scaleX(0.9229);">Business Analysis</span>
<svg style="position:absolute;left:1006px;top:189px;" width="82" height="36" viewBox="0 0 82 36"><defs><linearGradient id="bg1" x1="0" y1="0" x2="0" y2="1"><stop offset="0" stop-color="#fbfbfb"/><stop offset="0.45" stop-color="#e8e8e8"/><stop offset="1" stop-color="#bdbdbd"/></linearGradient>
<linearGradient id="ag1" x1="0" y1="0" x2="1" y2="0.6"><stop offset="0" stop-color="#b0b0b0"/><stop offset="0.5" stop-color="#6a6a6a"/><stop offset="1" stop-color="#202020"/></linearGradient></defs>
<rect x="0.5" y="0.5" width="81" height="35" rx="5" fill="url(#bg1)" stroke="#8d8d8d"/>
<path d="M6,14 L18.7,5.4 V11.4 H24 A10.2,10.2 0 0 1 24,31.8 H12.7 V26.4 H24 A4.8,4.8 0 0 0 24,16.8 H18.7 V22.5 Z" fill="url(#ag1)"/></svg>
<span class="t" style="left:1048.20px;top:197.31px;font:italic 700 9.5px 'Liberation Sans', sans-serif;line-height:9.5px;color:#111;transform:scaleX(0.8972);">Back to</span>
<span class="t" style="left:1051.60px;top:208.31px;font:italic 700 9.5px 'Liberation Sans', sans-serif;line-height:9.5px;color:#111;transform:scaleX(0.9592);">Menu</span>
<span class="t" style="left:1207.00px;top:210.62px;font:400 11.5px 'Liberation Sans', sans-serif;line-height:11.5px;color:#fff;transform:scaleX(0.9815);text-decoration:underline;">Terms of Use</span>
<div style="position:absolute;left:107px;top:265px;width:877px;height:34px;background:#DDEBF7;"></div>
<div style="position:absolute;left:0px;top:299px;width:1343px;height:1.2px;background:#8A8A8A;"></div>
<span class="t" style="left:336.40px;top:269.62px;font:700 11.5px 'Liberation Sans', sans-serif;line-height:11.5px;color:#000;transform:scaleX(0.9300);">Mon</span>
<div style="position:absolute;left:359px;top:265px;width:17px;height:17px;background:#DDEBF7;"></div>
<div style="position:absolute;left:359px;top:265px;width:15px;height:15px;border:1px solid #B0B0B0;background:#fff;"></div>
<svg style="position:absolute;left:363px;top:271px;" width="9" height="5" viewBox="0 0 9 5"><path d="M0,0 H9 L4.5,5 Z" fill="#6d6d6d"/></svg>
<div style="position:absolute;left:311px;top:282px;width:15px;height:15px;border:1px solid #B0B0B0;background:#fff;"></div>
<svg style="position:absolute;left:313px;top:285px;" width="13" height="12" viewBox="0 0 13 12"><path d="M4,0.5 H12 L9,4 V10.5 L7,10.5 V4 Z" fill="#555"/><path d="M1,8 H6 L3.5,11 Z" fill="#555"/></svg>
<span class="t" style="left:110.30px;top:286.62px;font:700 11.5px 'Liberation Sans', sans-serif;line-height:11.5px;color:#000;transform:scaleX(0.8700);">Row Labels</span>
<span class="t" style="left:350.05px;top:286.62px;font:700 11.5px 'Liberation Sans', sans-serif;line-height:11.5px;color:#000;transform:scaleX(0.9200);">1</span>
<span class="t" style="left:398.05px;top:286.62px;font:700 11.5px 'Liberation Sans', sans-serif;line-height:11.5px;color:#000;transform:scaleX(0.9200);">2</span>
<span class="t" style="left:446.05px;top:286.62px;font:700 11.5px 'Liberation Sans', sans-serif;line-height:11.5px;color:#000;transform:scaleX(0.9200);">3</span>
<span class="t" style="left:494.05px;top:286.62px;font:700 11.5px 'Liberation Sans', sans-serif;line-height:11.5px;color:#000;transform:scaleX(0.9200);">4</span>
<span class="t" style="left:542.05px;top:286.62px;font:700 11.5px 'Liberation Sans', sans-serif;line-height:11.5px;color:#000;transform:scaleX(0.9200);">5</span>
<span class="t" style="left:590.05px;top:286.62px;font:700 11.5px 'Liberation Sans', sans-serif;line-height:11.5px;color:#000;transform:scaleX(0.9200);">6</span>
<span class="t" style="left:638.05px;top:286.62px;font:700 11.5px 'Liberation Sans', sans-serif;line-height:11.5px;color:#000;transform:scaleX(0.9200);">7</span>
<span class="t" style="left:686.05px;top:286.62px;font:700 11.5px 'Liberation Sans', sans-serif;line-height:11.5px;color:#000;transform:scaleX(0.9200);">8</span>
<span class="t" style="left:734.05px;top:286.62px;font:700 11.5px 'Liberation Sans', sans-serif;line-height:11.5px;color:#000;transform:scaleX(0.9200);">9</span>
<span class="t" style="left:779.11px;top:286.62px;font:700 11.5px 'Liberation Sans', sans-serif;line-height:11.5px;color:#000;transform:scaleX(0.9200);">10</span>
<span class="t" style="left:827.40px;top:286.62px;font:700 11.5px 'Liberation Sans', sans-serif;line-height:11.5px;color:#000;transform:scaleX(0.9200);">11</span>
<span class="t" style="left:875.11px;top:286.62px;font:700 11.5px 'Liberation Sans', sans-serif;line-height:11.5px;color:#000;transform:scaleX(0.9200);">12</span>
<span class="t" style="left:915.30px;top:286.62px;font:700 11.5px 'Liberation Sans', sans-serif;line-height:11.5px;color:#000;transform:scaleX(0.9013);">Grand Total</span>
<svg style="position:absolute;left:113px;top:306px;" width="7" height="7" viewBox="0 0 7 7"><rect x="0.5" y="0.5" width="6" height="6" rx="1" fill="#F4F6F9" stroke="#8E9BAD"/><path d="M2,3.5 H5" stroke="#222"/></svg>
<span class="t" style="left:122.20px;top:303.62px;font:700 11.5px 'Liberation Sans', sans-serif;line-height:11.5px;color:#000;transform:scaleX(0.9038);">Sweeties</span>
<div style="position:absolute;left:107px;top:316px;width:877px;height:1px;background:#A0B3CA;"></div>
<span class="t" style="left:134.20px;top:320.62px;font:700 11.5px 'Liberation Sans', sans-serif;line-height:11.5px;color:#000;transform:scaleX(0.8696);">Chocolate Bar</span>
<span class="t" style="left:146.20px;top:337.62px;font:400 11.5px 'Liberation Sans', sans-serif;line-height:11.5px;color:#000;transform:scaleX(1.0252);">Sum of Projected Sales (Units/Kg)</span>
<span class="t" style="left:338.76px;top:337.62px;font:400 11.5px 'Liberation Sans', sans-serif;line-height:11.5px;color:#000;transform:scaleX(0.9200);">2.165</span>
<span class="t" style="left:386.76px;top:337.62px;font:400 11.5px 'Liberation Sans', sans-serif;line-height:11.5px;color:#000;transform:scaleX(0.9200);">2.365</span>
<span class="t" style="left:434.76px;top:337.62px;font:400 11.5px 'Liberation Sans', sans-serif;line-height:11.5px;color:#000;transform:scaleX(0.9200);">2.600</span>
<span class="t" style="left:482.76px;top:337.62px;font:400 11.5px 'Liberation Sans', sans-serif;line-height:11.5px;color:#000;transform:scaleX(0.9200);">2.890</span>
<span class="t" style="left:530.76px;top:337.62px;font:400 11.5px 'Liberation Sans', sans-serif;line-height:11.5px;color:#000;transform:scaleX(0.9200);">2.165</span>
<span class="t" style="left:578.76px;top:337.62px;font:400 11.5px 'Liberation Sans', sans-serif;line-height:11.5px;color:#000;transform:scaleX(0.9200);">3.715</span>
<span class="t" style="left:626.76px;top:337.62px;font:400 11.5px 'Liberation Sans', sans-serif;line-height:11.5px;color:#000;transform:scaleX(0.9200);">3.715</span>
<span class="t" style="left:674.76px;top:337.62px;font:400 11.5px 'Liberation Sans', sans-serif;line-height:11.5px;color:#000;transform:scaleX(0.9200);">2.365</span>
<span class="t" style="left:722.76px;top:337.62px;font:400 11.5px 'Liberation Sans', sans-serif;line-height:11.5px;color:#000;transform:scaleX(0.9200);">2.365</span>
<span class="t" style="left:770.76px;top:337.62px;font:400 11.5px 'Liberation Sans', sans-serif;line-height:11.5px;color:#000;transform:scaleX(0.9200);">2.890</span>
<span class="t" style="left:818.76px;top:337.62px;font:400 11.5px 'Liberation Sans', sans-serif;line-height:11.5px;color:#000;transform:scaleX(0.9200);">2.600</span>
<span class="t" style="left:866.76px;top:337.62px;font:400 11.5px 'Liberation Sans', sans-serif;line-height:11.5px;color:#000;transform:scaleX(0.9200);">3.250</span>
<span class="t" style="left:927.81px;top:337.62px;font:400 11.5px 'Liberation Sans', sans-serif;line-height:11.5px;color:#000;transform:scaleX(0.9200);">33.085</span>
<span class="t" style="left:146.20px;top:354.62px;font:400 11.5px 'Liberation Sans', sans-serif;line-height:11.5px;color:#000;transform:scaleX(1.0264);">Sum of Sold Units/Kg</span>
<span class="t" style="left:338.76px;top:354.62px;font:400 11.5px 'Liberation Sans', sans-serif;line-height:11.5px;color:#000;transform:scaleX(0.9200);">2.600</span>
<span class="t" style="left:386.76px;top:354.62px;font:400 11.5px 'Liberation Sans', sans-serif;line-height:11.5px;color:#000;transform:scaleX(0.9200);">2.600</span>
<span class="t" style="left:434.76px;top:354.62px;font:400 11.5px 'Liberation Sans', sans-serif;line-height:11.5px;color:#000;transform:scaleX(0.9200);">2.600</span>
<span class="t" style="left:482.76px;top:354.62px;font:400 11.5px 'Liberation Sans', sans-serif;line-height:11.5px;color:#000;transform:scaleX(0.9200);">2.600</span>
<span class="t" style="left:530.76px;top:354.62px;font:400 11.5px 'Liberation Sans', sans-serif;line-height:11.5px;color:#000;transform:scaleX(0.9200);">2.600</span>
<span class="t" style="left:578.76px;top:354.62px;font:400 11.5px 'Liberation Sans', sans-serif;line-height:11.5px;color:#000;transform:scaleX(0.9200);">2.600</span>
<span class="t" style="left:626.76px;top:354.62px;font:400 11.5px 'Liberation Sans', sans-serif;line-height:11.5px;color:#000;transform:scaleX(0.9200);">2.600</span>
<span class="t" style="left:674.76px;top:354.62px;font:400 11.5px 'Liberation Sans', sans-serif;line-height:11.5px;color:#000;transform:scaleX(0.9200);">2.600</span>
<span class="t" style="left:722.76px;top:354.62px;font:400 11.5px 'Liberation Sans', sans-serif;line-height:11.5px;color:#000;transform:scaleX(0.9200);">2.600</span>
<span class="t" style="left:770.76px;top:354.62px;font:400 11.5px 'Liberation Sans', sans-serif;line-height:11.5px;color:#000;transform:scaleX(0.9200);">2.600</span>
<span class="t" style="left:818.76px;top:354.62px;font:400 11.5px 'Liberation Sans', sans-serif;line-height:11.5px;color:#000;transform:scaleX(0.9200);">2.600</span>
<span class="t" style="left:866.76px;top:354.62px;font:400 11.5px 'Liberation Sans', sans-serif;line-height:11.5px;color:#000;transform:scaleX(0.9200);">2.600</span>
<span class="t" style="left:927.81px;top:354.62px;font:400 11.5px 'Liberation Sans', sans-serif;line-height:11.5px;color:#000;transform:scaleX(0.9200);">31.200</span>
<span class="t" style="left:146.20px;top:371.62px;font:400 11.5px 'Liberation Sans', sans-serif;line-height:11.5px;color:#000;transform:scaleX(1.0352);">Sum of Sales Realization %</span>
<span class="t" style="left:337.00px;top:371.62px;font:400 11.5px 'Liberation Sans', sans-serif;line-height:11.5px;color:#000;transform:scaleX(0.9200);">20,1%</span>
<span class="t" style="left:387.94px;top:371.62px;font:400 11.5px 'Liberation Sans', sans-serif;line-height:11.5px;color:#000;transform:scaleX(0.9200);">9,9%</span>
<span class="t" style="left:435.94px;top:371.62px;font:400 11.5px 'Liberation Sans', sans-serif;line-height:11.5px;color:#000;transform:scaleX(0.9200);">0,0%</span>
<span class="t" style="left:479.24px;top:371.62px;font:400 11.5px 'Liberation Sans', sans-serif;line-height:11.5px;color:#E3202B;transform:scaleX(0.9200);">-10,0%</span>
<span class="t" style="left:529.00px;top:371.62px;font:400 11.5px 'Liberation Sans', sans-serif;line-height:11.5px;color:#000;transform:scaleX(0.9200);">20,1%</span>
<span class="t" style="left:575.24px;top:371.62px;font:400 11.5px 'Liberation Sans', sans-serif;line-height:11.5px;color:#E3202B;transform:scaleX(0.9200);">-30,0%</span>
<span class="t" style="left:623.24px;top:371.62px;font:400 11.5px 'Liberation Sans', sans-serif;line-height:11.5px;color:#E3202B;transform:scaleX(0.9200);">-30,0%</span>
<span class="t" style="left:675.94px;top:371.62px;font:400 11.5px 'Liberation Sans', sans-serif;line-height:11.5px;color:#000;transform:scaleX(0.9200);">9,9%</span>
<span class="t" style="left:723.94px;top:371.62px;font:400 11.5px 'Liberation Sans', sans-serif;line-height:11.5px;color:#000;transform:scaleX(0.9200);">9,9%</span>
<span class="t" style="left:767.24px;top:371.62px;font:400 11.5px 'Liberation Sans', sans-serif;line-height:11.5px;color:#E3202B;transform:scaleX(0.9200);">-10,0%</span>
<span class="t" style="left:819.94px;top:371.62px;font:400 11.5px 'Liberation Sans', sans-serif;line-height:11.5px;color:#000;transform:scaleX(0.9200);">0,0%</span>
<span class="t" style="left:863.24px;top:371.62px;font:400 11.5px 'Liberation Sans', sans-serif;line-height:11.5px;color:#E3202B;transform:scaleX(0.9200);">-20,0%</span>
<span class="t" style="left:930.18px;top:371.62px;font:400 11.5px 'Liberation Sans', sans-serif;line-height:11.5px;color:#E3202B;transform:scaleX(0.9200);">-5,7%</span>
<span class="t" style="left:134.20px;top:388.62px;font:700 11.5px 'Liberation Sans', sans-serif;line-height:11.5px;color:#000;transform:scaleX(0.8887);">Haribo Gold-Bears</span>
<span class="t" style="left:146.20px;top:405.62px;font:400 11.5px 'Liberation Sans', sans-serif;line-height:11.5px;color:#000;transform:scaleX(1.0252);">Sum of Projected Sales (Units/Kg)</span>
<span class="t" style="left:338.76px;top:405.62px;font:400 11.5px 'Liberation Sans', sans-serif;line-height:11.5px;color:#000;transform:scaleX(0.9200);">1.085</span>
<span class="t" style="left:386.76px;top:405.62px;font:400 11.5px 'Liberation Sans', sans-serif;line-height:11.5px;color:#000;transform:scaleX(0.9200);">1.445</span>
<span class="t" style="left:434.76px;top:405.62px;font:400 11.5px 'Liberation Sans', sans-serif;line-height:11.5px;color:#000;transform:scaleX(0.9200);">1.085</span>
<span class="t" style="left:482.76px;top:405.62px;font:400 11.5px 'Liberation Sans', sans-serif;line-height:11.5px;color:#000;transform:scaleX(0.9200);">1.445</span>
<span class="t" style="left:530.76px;top:405.62px;font:400 11.5px 'Liberation Sans', sans-serif;line-height:11.5px;color:#000;transform:scaleX(0.9200);">1.300</span>
<span class="t" style="left:578.76px;top:405.62px;font:400 11.5px 'Liberation Sans', sans-serif;line-height:11.5px;color:#000;transform:scaleX(0.9200);">1.300</span>
<span class="t" style="left:626.76px;top:405.62px;font:400 11.5px 'Liberation Sans', sans-serif;line-height:11.5px;color:#000;transform:scaleX(0.9200);">1.300</span>
<span class="t" style="left:674.76px;top:405.62px;font:400 11.5px 'Liberation Sans', sans-serif;line-height:11.5px;color:#000;transform:scaleX(0.9200);">1.300</span>
<span class="t" style="left:722.76px;top:405.62px;font:400 11.5px 'Liberation Sans', sans-serif;line-height:11.5px;color:#000;transform:scaleX(0.9200);">1.855</span>
<span class="t" style="left:770.76px;top:405.62px;font:400 11.5px 'Liberation Sans', sans-serif;line-height:11.5px;color:#000;transform:scaleX(0.9200);">1.625</span>
<span class="t" style="left:818.76px;top:405.62px;font:400 11.5px 'Liberation Sans', sans-serif;line-height:11.5px;color:#000;transform:scaleX(0.9200);">1.445</span>
<span class="t" style="left:866.76px;top:405.62px;font:400 11.5px 'Liberation Sans', sans-serif;line-height:11.5px;color:#000;transform:scaleX(0.9200);">1.085</span>
<span class="t" style="left:927.81px;top:405.62px;font:400 11.5px 'Liberation Sans', sans-serif;line-height:11.5px;color:#000;transform:scaleX(0.9200);">16.270</span>
<span class="t" style="left:146.20px;top:422.62px;font:400 11.5px 'Liberation Sans', sans-serif;line-height:11.5px;color:#000;transform:scaleX(1.0264);">Sum of Sold Units/Kg</span>
<span class="t" style="left:338.76px;top:422.62px;font:400 11.5px 'Liberation Sans', sans-serif;line-height:11.5px;color:#000;transform:scaleX(0.9200);">1.300</span>
<span class="t" style="left:386.76px;top:422.62px;font:400 11.5px 'Liberation Sans', sans-serif;line-height:11.5px;color:#000;transform:scaleX(0.9200);">1.300</span>
<span class="t" style="left:434.76px;top:422.62px;font:400 11.5px 'Liberation Sans', sans-serif;line-height:11.5px;color:#000;transform:scaleX(0.9200);">1.300</span>
<span class="t" style="left:482.76px;top:422.62px;font:400 11.5px 'Liberation Sans', sans-serif;line-height:11.5px;color:#000;transform:scaleX(0.9200);">1.300</span>
<span class="t" style="left:530.76px;top:422.62px;font:400 11.5px 'Liberation Sans', sans-serif;line-height:11.5px;color:#000;transform:scaleX(0.9200);">1.300</span>
<span class="t" style="left:578.76px;top:422.62px;font:400 11.5px 'Liberation Sans', sans-serif;line-height:11.5px;color:#000;transform:scaleX(0.9200);">1.300</span>
<span class="t" style="left:626.76px;top:422.62px;font:400 11.5px 'Liberation Sans', sans-serif;line-height:11.5px;color:#000;transform:scaleX(0.9200);">1.300</span>
<span class="t" style="left:674.76px;top:422.62px;font:400 11.5px 'Liberation Sans', sans-serif;line-height:11.5px;color:#000;transform:scaleX(0.9200);">1.300</span>
<span class="t" style="left:722.76px;top:422.62px;font:400 11.5px 'Liberation Sans', sans-serif;line-height:11.5px;color:#000;transform:scaleX(0.9200);">1.300</span>
<span class="t" style="left:770.76px;top:422.62px;font:400 11.5px 'Liberation Sans', sans-serif;line-height:11.5px;color:#000;transform:scaleX(0.9200);">1.300</span>
<span class="t" style="left:818.76px;top:422.62px;font:400 11.5px 'Liberation Sans', sans-serif;line-height:11.5px;color:#000;transform:scaleX(0.9200);">1.300</span>
<span class="t" style="left:866.76px;top:422.62px;font:400 11.5px 'Liberation Sans', sans-serif;line-height:11.5px;color:#000;transform:scaleX(0.9200);">1.300</span>
<span class="t" style="left:927.81px;top:422.62px;font:400 11.5px 'Liberation Sans', sans-serif;line-height:11.5px;color:#000;transform:scaleX(0.9200);">15.600</span>
<span class="t" style="left:146.20px;top:439.62px;font:400 11.5px 'Liberation Sans', sans-serif;line-height:11.5px;color:#000;transform:scaleX(1.0352);">Sum of Sales Realization %</span>
<span class="t" style="left:337.00px;top:439.62px;font:400 11.5px 'Liberation Sans', sans-serif;line-height:11.5px;color:#000;transform:scaleX(0.9200);">19,8%</span>
<span class="t" style="left:383.24px;top:439.62px;font:400 11.5px 'Liberation Sans', sans-serif;line-height:11.5px;color:#E3202B;transform:scaleX(0.9200);">-10,0%</span>
<span class="t" style="left:433.00px;top:439.62px;font:400 11.5px 'Liberation Sans', sans-serif;line-height:11.5px;color:#000;transform:scaleX(0.9200);">19,8%</span>
<span class="t" style="left:479.24px;top:439.62px;font:400 11.5px 'Liberation Sans', sans-serif;line-height:11.5px;color:#E3202B;transform:scaleX(0.9200);">-10,0%</span>
<span class="t" style="left:531.94px;top:439.62px;font:400 11.5px 'Liberation Sans', sans-serif;line-height:11.5px;color:#000;transform:scaleX(0.9200);">0,0%</span>
<span class="t" style="left:579.94px;top:439.62px;font:400 11.5px 'Liberation Sans', sans-serif;line-height:11.5px;color:#000;transform:scaleX(0.9200);">0,0%</span>
<span class="t" style="left:627.94px;top:439.62px;font:400 11.5px 'Liberation Sans', sans-serif;line-height:11.5px;color:#000;transform:scaleX(0.9200);">0,0%</span>
<span class="t" style="left:675.94px;top:439.62px;font:400 11.5px 'Liberation Sans', sans-serif;line-height:11.5px;color:#000;transform:scaleX(0.9200);">0,0%</span>
<span class="t" style="left:719.24px;top:439.62px;font:400 11.5px 'Liberation Sans', sans-serif;line-height:11.5px;color:#E3202B;transform:scaleX(0.9200);">-29,9%</span>
<span class="t" style="left:767.24px;top:439.62px;font:400 11.5px 'Liberation Sans', sans-serif;line-height:11.5px;color:#E3202B;transform:scaleX(0.9200);">-20,0%</span>
<span class="t" style="left:815.24px;top:439.62px;font:400 11.5px 'Liberation Sans', sans-serif;line-height:11.5px;color:#E3202B;transform:scaleX(0.9200);">-10,0%</span>
<span class="t" style="left:865.00px;top:439.62px;font:400 11.5px 'Liberation Sans', sans-serif;line-height:11.5px;color:#000;transform:scaleX(0.9200);">19,8%</span>
<span class="t" style="left:930.18px;top:439.62px;font:400 11.5px 'Liberation Sans', sans-serif;line-height:11.5px;color:#E3202B;transform:scaleX(0.9200);">-4,1%</span>
<span class="t" style="left:134.20px;top:456.62px;font:700 11.5px 'Liberation Sans', sans-serif;line-height:11.5px;color:#000;transform:scaleX(0.8885);">Haribo Pico-Balla</span>
<span class="t" style="left:146.20px;top:473.62px;font:400 11.5px 'Liberation Sans', sans-serif;line-height:11.5px;color:#000;transform:scaleX(1.0252);">Sum of Projected Sales (Units/Kg)</span>
<span class="t" style="left:338.76px;top:473.62px;font:400 11.5px 'Liberation Sans', sans-serif;line-height:11.5px;color:#000;transform:scaleX(0.9200);">1.180</span>
<span class="t" style="left:386.76px;top:473.62px;font:400 11.5px 'Liberation Sans', sans-serif;line-height:11.5px;color:#000;transform:scaleX(0.9200);">1.855</span>
<span class="t" style="left:434.76px;top:473.62px;font:400 11.5px 'Liberation Sans', sans-serif;line-height:11.5px;color:#000;transform:scaleX(0.9200);">1.180</span>
<span class="t" style="left:482.76px;top:473.62px;font:400 11.5px 'Liberation Sans', sans-serif;line-height:11.5px;color:#000;transform:scaleX(0.9200);">1.300</span>
<span class="t" style="left:530.76px;top:473.62px;font:400 11.5px 'Liberation Sans', sans-serif;line-height:11.5px;color:#000;transform:scaleX(0.9200);">1.445</span>
<span class="t" style="left:578.76px;top:473.62px;font:400 11.5px 'Liberation Sans', sans-serif;line-height:11.5px;color:#000;transform:scaleX(0.9200);">1.855</span>
<span class="t" style="left:626.76px;top:473.62px;font:400 11.5px 'Liberation Sans', sans-serif;line-height:11.5px;color:#000;transform:scaleX(0.9200);">1.445</span>
<span class="t" style="left:674.76px;top:473.62px;font:400 11.5px 'Liberation Sans', sans-serif;line-height:11.5px;color:#000;transform:scaleX(0.9200);">1.085</span>
<span class="t" style="left:722.76px;top:473.62px;font:400 11.5px 'Liberation Sans', sans-serif;line-height:11.5px;color:#000;transform:scaleX(0.9200);">1.855</span>
<span class="t" style="left:770.76px;top:473.62px;font:400 11.5px 'Liberation Sans', sans-serif;line-height:11.5px;color:#000;transform:scaleX(0.9200);">1.855</span>
<span class="t" style="left:818.76px;top:473.62px;font:400 11.5px 'Liberation Sans', sans-serif;line-height:11.5px;color:#000;transform:scaleX(0.9200);">1.085</span>
<span class="t" style="left:866.76px;top:473.62px;font:400 11.5px 'Liberation Sans', sans-serif;line-height:11.5px;color:#000;transform:scaleX(0.9200);">1.180</span>
<span class="t" style="left:927.81px;top:473.62px;font:400 11.5px 'Liberation Sans', sans-serif;line-height:11.5px;color:#000;transform:scaleX(0.9200);">17.320</span>
<span class="t" style="left:146.20px;top:490.62px;font:400 11.5px 'Liberation Sans', sans-serif;line-height:11.5px;color:#000;transform:scaleX(1.0264);">Sum of Sold Units/Kg</span>
<span class="t" style="left:338.76px;top:490.62px;font:400 11.5px 'Liberation Sans', sans-serif;line-height:11.5px;color:#000;transform:scaleX(0.9200);">2.000</span>
<span class="t" style="left:386.76px;top:490.62px;font:400 11.5px 'Liberation Sans', sans-serif;line-height:11.5px;color:#000;transform:scaleX(0.9200);">2.000</span>
<span class="t" style="left:434.76px;top:490.62px;font:400 11.5px 'Liberation Sans', sans-serif;line-height:11.5px;color:#000;transform:scaleX(0.9200);">2.000</span>
<span class="t" style="left:482.76px;top:490.62px;font:400 11.5px 'Liberation Sans', sans-serif;line-height:11.5px;color:#000;transform:scaleX(0.9200);">3.000</span>
<span class="t" style="left:530.76px;top:490.62px;font:400 11.5px 'Liberation Sans', sans-serif;line-height:11.5px;color:#000;transform:scaleX(0.9200);">3.000</span>
<span class="t" style="left:578.76px;top:490.62px;font:400 11.5px 'Liberation Sans', sans-serif;line-height:11.5px;color:#000;transform:scaleX(0.9200);">3.000</span>
<span class="t" style="left:626.76px;top:490.62px;font:400 11.5px 'Liberation Sans', sans-serif;line-height:11.5px;color:#000;transform:scaleX(0.9200);">3.000</span>
<span class="t" style="left:674.76px;top:490.62px;font:400 11.5px 'Liberation Sans', sans-serif;line-height:11.5px;color:#000;transform:scaleX(0.9200);">3.000</span>
<span class="t" style="left:722.76px;top:490.62px;font:400 11.5px 'Liberation Sans', sans-serif;line-height:11.5px;color:#000;transform:scaleX(0.9200);">4.000</span>
<span class="t" style="left:770.76px;top:490.62px;font:400 11.5px 'Liberation Sans', sans-serif;line-height:11.5px;color:#000;transform:scaleX(0.9200);">4.000</span>
<span class="t" style="left:818.76px;top:490.62px;font:400 11.5px 'Liberation Sans', sans-serif;line-height:11.5px;color:#000;transform:scaleX(0.9200);">4.000</span>
<span class="t" style="left:866.76px;top:490.62px;font:400 11.5px 'Liberation Sans', sans-serif;line-height:11.5px;color:#000;transform:scaleX(0.9200);">4.000</span>
<span class="t" style="left:927.81px;top:490.62px;font:400 11.5px 'Liberation Sans', sans-serif;line-height:11.5px;color:#000;transform:scaleX(0.9200);">37.000</span>
<span class="t" style="left:146.20px;top:507.62px;font:400 11.5px 'Liberation Sans', sans-serif;line-height:11.5px;color:#000;transform:scaleX(1.0352);">Sum of Sales Realization %</span>
<span class="t" style="left:337.00px;top:507.62px;font:400 11.5px 'Liberation Sans', sans-serif;line-height:11.5px;color:#000;transform:scaleX(0.9200);">69,5%</span>
<span class="t" style="left:387.94px;top:507.62px;font:400 11.5px 'Liberation Sans', sans-serif;line-height:11.5px;color:#000;transform:scaleX(0.9200);">7,8%</span>
<span class="t" style="left:433.00px;top:507.62px;font:400 11.5px 'Liberation Sans', sans-serif;line-height:11.5px;color:#000;transform:scaleX(0.9200);">69,5%</span>
<span class="t" style="left:478.05px;top:507.62px;font:400 11.5px 'Liberation Sans', sans-serif;line-height:11.5px;color:#000;transform:scaleX(0.9200);">130,8%</span>
<span class="t" style="left:526.05px;top:507.62px;font:400 11.5px 'Liberation Sans', sans-serif;line-height:11.5px;color:#000;transform:scaleX(0.9200);">107,6%</span>
<span class="t" style="left:577.00px;top:507.62px;font:400 11.5px 'Liberation Sans', sans-serif;line-height:11.5px;color:#000;transform:scaleX(0.9200);">61,7%</span>
<span class="t" style="left:622.05px;top:507.62px;font:400 11.5px 'Liberation Sans', sans-serif;line-height:11.5px;color:#000;transform:scaleX(0.9200);">107,6%</span>
<span class="t" style="left:670.05px;top:507.62px;font:400 11.5px 'Liberation Sans', sans-serif;line-height:11.5px;color:#000;transform:scaleX(0.9200);">176,5%</span>
<span class="t" style="left:718.45px;top:507.62px;font:400 11.5px 'Liberation Sans', sans-serif;line-height:11.5px;color:#000;transform:scaleX(0.9200);">115,6%</span>
<span class="t" style="left:766.45px;top:507.62px;font:400 11.5px 'Liberation Sans', sans-serif;line-height:11.5px;color:#000;transform:scaleX(0.9200);">115,6%</span>
<span class="t" style="left:814.05px;top:507.62px;font:400 11.5px 'Liberation Sans', sans-serif;line-height:11.5px;color:#000;transform:scaleX(0.9200);">268,7%</span>
<span class="t" style="left:862.05px;top:507.62px;font:400 11.5px 'Liberation Sans', sans-serif;line-height:11.5px;color:#000;transform:scaleX(0.9200);">239,0%</span>
<span class="t" style="left:926.45px;top:507.62px;font:400 11.5px 'Liberation Sans', sans-serif;line-height:11.5px;color:#000;transform:scaleX(0.9200);">113,6%</span>
<span class="t" style="left:134.20px;top:524.62px;font:700 11.5px 'Liberation Sans', sans-serif;line-height:11.5px;color:#000;transform:scaleX(0.8611);">Kinder Surprise</span>
<span class="t" style="left:146.20px;top:541.62px;font:400 11.5px 'Liberation Sans', sans-serif;line-height:11.5px;color:#000;transform:scaleX(1.0252);">Sum of Projected Sales (Units/Kg)</span>
<span class="t" style="left:338.76px;top:541.62px;font:400 11.5px 'Liberation Sans', sans-serif;line-height:11.5px;color:#000;transform:scaleX(0.9200);">1.300</span>
<span class="t" style="left:386.76px;top:541.62px;font:400 11.5px 'Liberation Sans', sans-serif;line-height:11.5px;color:#000;transform:scaleX(0.9200);">1.300</span>
<span class="t" style="left:434.76px;top:541.62px;font:400 11.5px 'Liberation Sans', sans-serif;line-height:11.5px;color:#000;transform:scaleX(0.9200);">1.625</span>
<span class="t" style="left:482.76px;top:541.62px;font:400 11.5px 'Liberation Sans', sans-serif;line-height:11.5px;color:#000;transform:scaleX(0.9200);">1.300</span>
<span class="t" style="left:530.76px;top:541.62px;font:400 11.5px 'Liberation Sans', sans-serif;line-height:11.5px;color:#000;transform:scaleX(0.9200);">1.300</span>
<span class="t" style="left:578.76px;top:541.62px;font:400 11.5px 'Liberation Sans', sans-serif;line-height:11.5px;color:#000;transform:scaleX(0.9200);">1.300</span>
<span class="t" style="left:626.76px;top:541.62px;font:400 11.5px 'Liberation Sans', sans-serif;line-height:11.5px;color:#000;transform:scaleX(0.9200);">1.855</span>
<span class="t" style="left:674.76px;top:541.62px;font:400 11.5px 'Liberation Sans', sans-serif;line-height:11.5px;color:#000;transform:scaleX(0.9200);">1.085</span>
<span class="t" style="left:722.76px;top:541.62px;font:400 11.5px 'Liberation Sans', sans-serif;line-height:11.5px;color:#000;transform:scaleX(0.9200);">1.625</span>
<span class="t" style="left:770.76px;top:541.62px;font:400 11.5px 'Liberation Sans', sans-serif;line-height:11.5px;color:#000;transform:scaleX(0.9200);">1.855</span>
<span class="t" style="left:818.76px;top:541.62px;font:400 11.5px 'Liberation Sans', sans-serif;line-height:11.5px;color:#000;transform:scaleX(0.9200);">1.180</span>
<span class="t" style="left:866.76px;top:541.62px;font:400 11.5px 'Liberation Sans', sans-serif;line-height:11.5px;color:#000;transform:scaleX(0.9200);">1.445</span>
<span class="t" style="left:927.81px;top:541.62px;font:400 11.5px 'Liberation Sans', sans-serif;line-height:11.5px;color:#000;transform:scaleX(0.9200);">17.170</span>
<span class="t" style="left:146.20px;top:558.62px;font:400 11.5px 'Liberation Sans', sans-serif;line-height:11.5px;color:#000;transform:scaleX(1.0264);">Sum of Sold Units/Kg</span>
<span class="t" style="left:338.76px;top:558.62px;font:400 11.5px 'Liberation Sans', sans-serif;line-height:11.5px;color:#000;transform:scaleX(0.9200);">1.250</span>
<span class="t" style="left:386.76px;top:558.62px;font:400 11.5px 'Liberation Sans', sans-serif;line-height:11.5px;color:#000;transform:scaleX(0.9200);">1.300</span>
<span class="t" style="left:434.76px;top:558.62px;font:400 11.5px 'Liberation Sans', sans-serif;line-height:11.5px;color:#000;transform:scaleX(0.9200);">1.300</span>
<span class="t" style="left:482.76px;top:558.62px;font:400 11.5px 'Liberation Sans', sans-serif;line-height:11.5px;color:#000;transform:scaleX(0.9200);">1.300</span>
<span class="t" style="left:530.76px;top:558.62px;font:400 11.5px 'Liberation Sans', sans-serif;line-height:11.5px;color:#000;transform:scaleX(0.9200);">1.300</span>
<span class="t" style="left:578.76px;top:558.62px;font:400 11.5px 'Liberation Sans', sans-serif;line-height:11.5px;color:#000;transform:scaleX(0.9200);">1.300</span>
<span class="t" style="left:626.76px;top:558.62px;font:400 11.5px 'Liberation Sans', sans-serif;line-height:11.5px;color:#000;transform:scaleX(0.9200);">1.300</span>
<span class="t" style="left:674.76px;top:558.62px;font:400 11.5px 'Liberation Sans', sans-serif;line-height:11.5px;color:#000;transform:scaleX(0.9200);">1.300</span>
<span class="t" style="left:722.76px;top:558.62px;font:400 11.5px 'Liberation Sans', sans-serif;line-height:11.5px;color:#000;transform:scaleX(0.9200);">1.300</span>
<span class="t" style="left:770.76px;top:558.62px;font:400 11.5px 'Liberation Sans', sans-serif;line-height:11.5px;color:#000;transform:scaleX(0.9200);">1.300</span>
<span class="t" style="left:818.76px;top:558.62px;font:400 11.5px 'Liberation Sans', sans-serif;line-height:11.5px;color:#000;transform:scaleX(0.9200);">1.300</span>
<span class="t" style="left:866.76px;top:558.62px;font:400 11.5px 'Liberation Sans', sans-serif;line-height:11.5px;color:#000;transform:scaleX(0.9200);">1.300</span>
<span class="t" style="left:927.81px;top:558.62px;font:400 11.5px 'Liberation Sans', sans-serif;line-height:11.5px;color:#000;transform:scaleX(0.9200);">15.550</span>
<span class="t" style="left:146.20px;top:575.62px;font:400 11.5px 'Liberation Sans', sans-serif;line-height:11.5px;color:#000;transform:scaleX(1.0352);">Sum of Sales Realization %</span>
<span class="t" style="left:338.18px;top:575.62px;font:400 11.5px 'Liberation Sans', sans-serif;line-height:11.5px;color:#E3202B;transform:scaleX(0.9200);">-3,8%</span>
<span class="t" style="left:387.94px;top:575.62px;font:400 11.5px 'Liberation Sans', sans-serif;line-height:11.5px;color:#000;transform:scaleX(0.9200);">0,0%</span>
<span class="t" style="left:431.24px;top:575.62px;font:400 11.5px 'Liberation Sans', sans-serif;line-height:11.5px;color:#E3202B;transform:scaleX(0.9200);">-20,0%</span>
<span class="t" style="left:483.94px;top:575.62px;font:400 11.5px 'Liberation Sans', sans-serif;line-height:11.5px;color:#000;transform:scaleX(0.9200);">0,0%</span>
<span class="t" style="left:531.94px;top:575.62px;font:400 11.5px 'Liberation Sans', sans-serif;line-height:11.5px;color:#000;transform:scaleX(0.9200);">0,0%</span>
<span class="t" style="left:579.94px;top:575.62px;font:400 11.5px 'Liberation Sans', sans-serif;line-height:11.5px;color:#000;transform:scaleX(0.9200);">0,0%</span>
<span class="t" style="left:623.24px;top:575.62px;font:400 11.5px 'Liberation Sans', sans-serif;line-height:11.5px;color:#E3202B;transform:scaleX(0.9200);">-29,9%</span>
<span class="t" style="left:673.00px;top:575.62px;font:400 11.5px 'Liberation Sans', sans-serif;line-height:11.5px;color:#000;transform:scaleX(0.9200);">19,8%</span>
<span class="t" style="left:719.24px;top:575.62px;font:400 11.5px 'Liberation Sans', sans-serif;line-height:11.5px;color:#E3202B;transform:scaleX(0.9200);">-20,0%</span>
<span class="t" style="left:767.24px;top:575.62px;font:400 11.5px 'Liberation Sans', sans-serif;line-height:11.5px;color:#E3202B;transform:scaleX(0.9200);">-29,9%</span>
<span class="t" style="left:817.00px;top:575.62px;font:400 11.5px 'Liberation Sans', sans-serif;line-height:11.5px;color:#000;transform:scaleX(0.9200);">10,2%</span>
<span class="t" style="left:863.24px;top:575.62px;font:400 11.5px 'Liberation Sans', sans-serif;line-height:11.5px;color:#E3202B;transform:scaleX(0.9200);">-10,0%</span>
<span class="t" style="left:930.18px;top:575.62px;font:400 11.5px 'Liberation Sans', sans-serif;line-height:11.5px;color:#E3202B;transform:scaleX(0.9200);">-9,4%</span>
<div style="position:absolute;left:107px;top:588px;width:877px;height:1.2px;background:#6F93BC;"></div>
<span class="t" style="left:109.90px;top:592.62px;font:700 11.5px 'Liberation Sans', sans-serif;line-height:11.5px;color:#000;transform:scaleX(0.9036);">Sweeties Sum of Projected Sales (Units/Kg)</span>
<span class="t" style="left:338.76px;top:592.62px;font:700 11.5px 'Liberation Sans', sans-serif;line-height:11.5px;color:#000;transform:scaleX(0.9200);">5.730</span>
<span class="t" style="left:386.76px;top:592.62px;font:700 11.5px 'Liberation Sans', sans-serif;line-height:11.5px;color:#000;transform:scaleX(0.9200);">6.965</span>
<span class="t" style="left:434.76px;top:592.62px;font:700 11.5px 'Liberation Sans', sans-serif;line-height:11.5px;color:#000;transform:scaleX(0.9200);">6.490</span>
<span class="t" style="left:482.76px;top:592.62px;font:700 11.5px 'Liberation Sans', sans-serif;line-height:11.5px;color:#000;transform:scaleX(0.9200);">6.935</span>
<span class="t" style="left:530.76px;top:592.62px;font:700 11.5px 'Liberation Sans', sans-serif;line-height:11.5px;color:#000;transform:scaleX(0.9200);">6.210</span>
<span class="t" style="left:578.76px;top:592.62px;font:700 11.5px 'Liberation Sans', sans-serif;line-height:11.5px;color:#000;transform:scaleX(0.9200);">8.170</span>
<span class="t" style="left:626.76px;top:592.62px;font:700 11.5px 'Liberation Sans', sans-serif;line-height:11.5px;color:#000;transform:scaleX(0.9200);">8.315</span>
<span class="t" style="left:674.76px;top:592.62px;font:700 11.5px 'Liberation Sans', sans-serif;line-height:11.5px;color:#000;transform:scaleX(0.9200);">5.835</span>
<span class="t" style="left:722.76px;top:592.62px;font:700 11.5px 'Liberation Sans', sans-serif;line-height:11.5px;color:#000;transform:scaleX(0.9200);">7.700</span>
<span class="t" style="left:770.76px;top:592.62px;font:700 11.5px 'Liberation Sans', sans-serif;line-height:11.5px;color:#000;transform:scaleX(0.9200);">8.225</span>
<span class="t" style="left:818.76px;top:592.62px;font:700 11.5px 'Liberation Sans', sans-serif;line-height:11.5px;color:#000;transform:scaleX(0.9200);">6.310</span>
<span class="t" style="left:866.76px;top:592.62px;font:700 11.5px 'Liberation Sans', sans-serif;line-height:11.5px;color:#000;transform:scaleX(0.9200);">6.960</span>
<span class="t" style="left:927.81px;top:592.62px;font:700 11.5px 'Liberation Sans', sans-serif;line-height:11.5px;color:#000;transform:scaleX(0.9200);">83.845</span>
<div style="position:absolute;left:107px;top:605px;width:877px;height:1.2px;background:#6F93BC;"></div>
<span class="t" style="left:109.90px;top:609.62px;font:700 11.5px 'Liberation Sans', sans-serif;line-height:11.5px;color:#000;transform:scaleX(0.9049);">Sweeties Sum of Sold Units/Kg</span>
<span class="t" style="left:338.76px;top:609.62px;font:700 11.5px 'Liberation Sans', sans-serif;line-height:11.5px;color:#000;transform:scaleX(0.9200);">7.150</span>
<span class="t" style="left:386.76px;top:609.62px;font:700 11.5px 'Liberation Sans', sans-serif;line-height:11.5px;color:#000;transform:scaleX(0.9200);">7.200</span>
<span class="t" style="left:434.76px;top:609.62px;font:700 11.5px 'Liberation Sans', sans-serif;line-height:11.5px;color:#000;transform:scaleX(0.9200);">7.200</span>
<span class="t" style="left:482.76px;top:609.62px;font:700 11.5px 'Liberation Sans', sans-serif;line-height:11.5px;color:#000;transform:scaleX(0.9200);">8.200</span>
<span class="t" style="left:530.76px;top:609.62px;font:700 11.5px 'Liberation Sans', sans-serif;line-height:11.5px;color:#000;transform:scaleX(0.9200);">8.200</span>
<span class="t" style="left:578.76px;top:609.62px;font:700 11.5px 'Liberation Sans', sans-serif;line-height:11.5px;color:#000;transform:scaleX(0.9200);">8.200</span>
<span class="t" style="left:626.76px;top:609.62px;font:700 11.5px 'Liberation Sans', sans-serif;line-height:11.5px;color:#000;transform:scaleX(0.9200);">8.200</span>
<span class="t" style="left:674.76px;top:609.62px;font:700 11.5px 'Liberation Sans', sans-serif;line-height:11.5px;color:#000;transform:scaleX(0.9200);">8.200</span>
<span class="t" style="left:722.76px;top:609.62px;font:700 11.5px 'Liberation Sans', sans-serif;line-height:11.5px;color:#000;transform:scaleX(0.9200);">9.200</span>
<span class="t" style="left:770.76px;top:609.62px;font:700 11.5px 'Liberation Sans', sans-serif;line-height:11.5px;color:#000;transform:scaleX(0.9200);">9.200</span>
<span class="t" style="left:818.76px;top:609.62px;font:700 11.5px 'Liberation Sans', sans-serif;line-height:11.5px;color:#000;transform:scaleX(0.9200);">9.200</span>
<span class="t" style="left:866.76px;top:609.62px;font:700 11.5px 'Liberation Sans', sans-serif;line-height:11.5px;color:#000;transform:scaleX(0.9200);">9.200</span>
<span class="t" style="left:927.81px;top:609.62px;font:700 11.5px 'Liberation Sans', sans-serif;line-height:11.5px;color:#000;transform:scaleX(0.9200);">99.350</span>
<div style="position:absolute;left:107px;top:622px;width:877px;height:1.2px;background:#6F93BC;"></div>
<span class="t" style="left:109.90px;top:626.62px;font:700 11.5px 'Liberation Sans', sans-serif;line-height:11.5px;color:#000;transform:scaleX(0.9011);">Sweeties Sum of Sales Realization %</span>
<span class="t" style="left:337.00px;top:626.62px;font:700 11.5px 'Liberation Sans', sans-serif;line-height:11.5px;color:#000;transform:scaleX(0.9200);">24,8%</span>
<span class="t" style="left:387.94px;top:626.62px;font:700 11.5px 'Liberation Sans', sans-serif;line-height:11.5px;color:#000;transform:scaleX(0.9200);">3,4%</span>
<span class="t" style="left:433.00px;top:626.62px;font:700 11.5px 'Liberation Sans', sans-serif;line-height:11.5px;color:#000;transform:scaleX(0.9200);">10,9%</span>
<span class="t" style="left:481.00px;top:626.62px;font:700 11.5px 'Liberation Sans', sans-serif;line-height:11.5px;color:#000;transform:scaleX(0.9200);">18,2%</span>
<span class="t" style="left:529.00px;top:626.62px;font:700 11.5px 'Liberation Sans', sans-serif;line-height:11.5px;color:#000;transform:scaleX(0.9200);">32,0%</span>
<span class="t" style="left:579.94px;top:626.62px;font:700 11.5px 'Liberation Sans', sans-serif;line-height:11.5px;color:#000;transform:scaleX(0.9200);">0,4%</span>
<span class="t" style="left:626.18px;top:626.62px;font:700 11.5px 'Liberation Sans', sans-serif;line-height:11.5px;color:#E3202B;transform:scaleX(0.9200);">-1,4%</span>
<span class="t" style="left:673.00px;top:626.62px;font:700 11.5px 'Liberation Sans', sans-serif;line-height:11.5px;color:#000;transform:scaleX(0.9200);">40,5%</span>
<span class="t" style="left:721.00px;top:626.62px;font:700 11.5px 'Liberation Sans', sans-serif;line-height:11.5px;color:#000;transform:scaleX(0.9200);">19,5%</span>
<span class="t" style="left:769.29px;top:626.62px;font:700 11.5px 'Liberation Sans', sans-serif;line-height:11.5px;color:#000;transform:scaleX(0.9200);">11,9%</span>
<span class="t" style="left:817.00px;top:626.62px;font:700 11.5px 'Liberation Sans', sans-serif;line-height:11.5px;color:#000;transform:scaleX(0.9200);">45,8%</span>
<span class="t" style="left:865.00px;top:626.62px;font:700 11.5px 'Liberation Sans', sans-serif;line-height:11.5px;color:#000;transform:scaleX(0.9200);">32,2%</span>
<span class="t" style="left:929.00px;top:626.62px;font:700 11.5px 'Liberation Sans', sans-serif;line-height:11.5px;color:#000;transform:scaleX(0.9200);">18,5%</span>
<div style="position:absolute;left:107px;top:639px;width:877px;height:1.2px;background:#6F93BC;"></div>
<svg style="position:absolute;left:113px;top:645px;" width="7" height="7" viewBox="0 0 7 7"><rect x="0.5" y="0.5" width="6" height="6" rx="1" fill="#F4F6F9" stroke="#8E9BAD"/><path d="M2,3.5 H5" stroke="#222"/><path d="M3.5,2 V5" stroke="#222"/></svg>
<span class="t" style="left:122.30px;top:643.62px;font:700 11.5px 'Liberation Sans', sans-serif;line-height:11.5px;color:#000;transform:scaleX(0.8606);">Fruits</span>
<div style="position:absolute;left:107px;top:656px;width:877px;height:1px;background:#A0B3CA;"></div>
<span class="t" style="left:146.20px;top:660.62px;font:400 11.5px 'Liberation Sans', sans-serif;line-height:11.5px;color:#000;transform:scaleX(1.0252);">Sum of Projected Sales (Units/Kg)</span>
<span class="t" style="left:338.76px;top:660.62px;font:400 11.5px 'Liberation Sans', sans-serif;line-height:11.5px;color:#000;transform:scaleX(0.9200);">1.260</span>
<span class="t" style="left:391.17px;top:660.62px;font:400 11.5px 'Liberation Sans', sans-serif;line-height:11.5px;color:#000;transform:scaleX(0.9200);">810</span>
<span class="t" style="left:439.17px;top:660.62px;font:400 11.5px 'Liberation Sans', sans-serif;line-height:11.5px;color:#000;transform:scaleX(0.9200);">905</span>
<span class="t" style="left:482.76px;top:660.62px;font:400 11.5px 'Liberation Sans', sans-serif;line-height:11.5px;color:#000;transform:scaleX(0.9200);">1.000</span>
<span class="t" style="left:530.76px;top:660.62px;font:400 11.5px 'Liberation Sans', sans-serif;line-height:11.5px;color:#000;transform:scaleX(0.9200);">1.000</span>
<span class="t" style="left:579.15px;top:660.62px;font:400 11.5px 'Liberation Sans', sans-serif;line-height:11.5px;color:#000;transform:scaleX(0.9200);">1.110</span>
<span class="t" style="left:626.76px;top:660.62px;font:400 11.5px 'Liberation Sans', sans-serif;line-height:11.5px;color:#000;transform:scaleX(0.9200);">1.535</span>
<span class="t" style="left:674.76px;top:660.62px;font:400 11.5px 'Liberation Sans', sans-serif;line-height:11.5px;color:#000;transform:scaleX(0.9200);">1.650</span>
<span class="t" style="left:722.76px;top:660.62px;font:400 11.5px 'Liberation Sans', sans-serif;line-height:11.5px;color:#000;transform:scaleX(0.9200);">1.360</span>
<span class="t" style="left:770.76px;top:660.62px;font:400 11.5px 'Liberation Sans', sans-serif;line-height:11.5px;color:#000;transform:scaleX(0.9200);">1.600</span>
<span class="t" style="left:818.76px;top:660.62px;font:400 11.5px 'Liberation Sans', sans-serif;line-height:11.5px;color:#000;transform:scaleX(0.9200);">1.840</span>
<span class="t" style="left:866.76px;top:660.62px;font:400 11.5px 'Liberation Sans', sans-serif;line-height:11.5px;color:#000;transform:scaleX(0.9200);">1.745</span>
<span class="t" style="left:927.81px;top:660.62px;font:400 11.5px 'Liberation Sans', sans-serif;line-height:11.5px;color:#000;transform:scaleX(0.9200);">15.815</span>
<div style="position:absolute;left:0px;top:680px;width:1365px;height:20px;background:#F1F1F1;"></div>
<div style="position:absolute;left:0px;top:679px;width:1365px;height:1px;background:#ABABAB;"></div>
<span class="t" style="left:7.50px;top:684.62px;font:400 11.5px 'Liberation Sans', sans-serif;line-height:11.5px;color:#444;transform:scaleX(0.9173);">Ready</span>
<div style="position:absolute;left:1074px;top:680px;width:38px;height:20px;background:#C8C8C8;"></div>
<svg style="position:absolute;left:1086px;top:683px;" width="13" height="13" viewBox="0 0 13 13"><g fill="none" stroke="#666"><rect x="0.5" y="0.5" width="12" height="12"/><path d="M4.5,0.5 V12.5 M8.5,0.5 V12.5 M0.5,4.5 H12.5 M0.5,8.5 H12.5"/></g></svg>
<svg style="position:absolute;left:1124px;top:683px;" width="14" height="13" viewBox="0 0 14 13"><g fill="none" stroke="#666"><rect x="0.5" y="0.5" width="13" height="12"/><rect x="3.5" y="2.5" width="7" height="8"/><path d="M5,4.5 H9 M5,6.5 H9 M5,8.5 H9"/></g></svg>
<svg style="position:absolute;left:1162px;top:683px;" width="14" height="13" viewBox="0 0 14 13"><g fill="none" stroke="#666"><rect x="0.5" y="0.5" width="13" height="12"/><path d="M4.5,0.5 V6.5 M8.5,0.5 V6.5 H0.5"/></g></svg>
<div style="position:absolute;left:1193px;top:689px;width:6px;height:2px;background:#555;"></div>
<div style="position:absolute;left:1203px;top:689px;width:99px;height:1px;background:#999;"></div>
<div style="position:absolute;left:1253px;top:686px;width:1px;height:7px;background:#999;"></div>
<div style="position:absolute;left:1243px;top:684px;width:4px;height:11px;background:#666;"></div>
<div style="position:absolute;left:1307px;top:689px;width:8px;height:2px;background:#555;"></div>
<div style="position:absolute;left:1310px;top:685px;width:2px;height:9px;background:#555;"></div>
<span class="t" style="left:1329.70px;top:684.62px;font:400 11.5px 'Liberation Sans', sans-serif;line-height:11.5px;color:#444;transform:scaleX(0.9248);">%85</span>
</body></html>
